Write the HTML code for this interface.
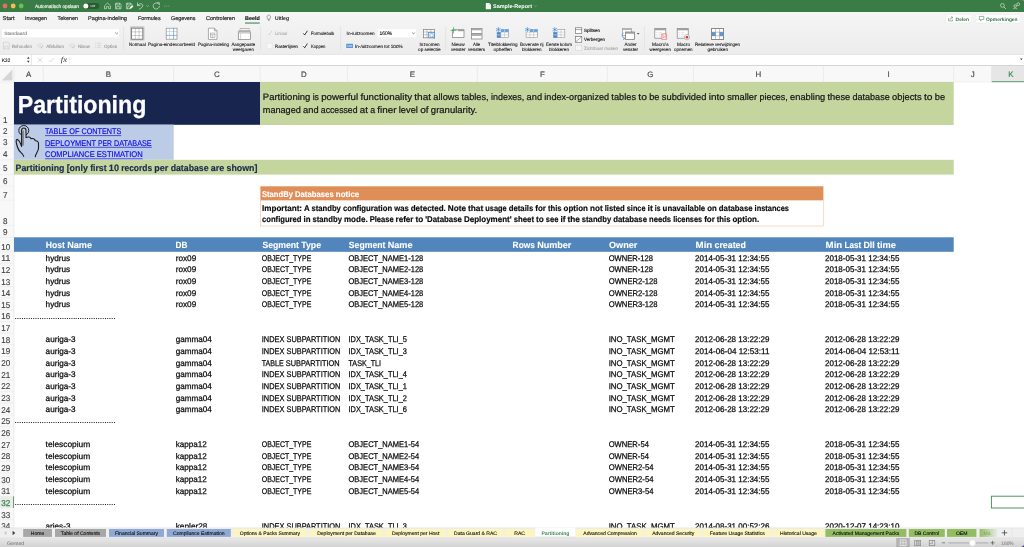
<!DOCTYPE html>
<html lang="nl">
<head>
<meta charset="utf-8">
<title>Sample-Report - Partitioning</title>
<style>
html,body{margin:0;padding:0;background:#fff;}
body{width:1024px;height:547px;overflow:hidden;position:relative;font-family:"Liberation Sans", sans-serif;}
#app{position:absolute;left:0;top:0;width:1024px;height:547px;overflow:hidden;}
#app>div{position:absolute;}
#ui{position:absolute;left:0;top:0;width:1024px;height:547px;font-family:"Liberation Sans", sans-serif;will-change:transform;}
#ui text{white-space:pre;text-rendering:geometricPrecision;}
</style>
</head>
<body>
<div id="app">
<div style="left:0px;top:0px;width:1024px;height:12.5px;background:#3a7c45;"></div>
<div style="left:0px;top:12.3px;width:1024px;height:42.3px;background:linear-gradient(#f5f5f5,#f1f1f1 45%,#ececec);"></div>
<div style="left:0px;top:54.6px;width:1024px;height:10.8px;background:#fff;"></div>
<div style="left:0px;top:54.2px;width:1024px;height:0.6px;background:#e6e6e6;"></div>
<div style="left:0px;top:64.9px;width:1024px;height:1.1px;background:linear-gradient(#e9e9e9,#c2c2c2);"></div>
<div style="left:0px;top:66px;width:1024px;height:462px;background:#fff;"></div>
<div style="left:0px;top:66px;width:1024px;height:16px;background:#f8f8f8;"></div>
<div style="left:0px;top:82px;width:14px;height:446px;background:#f8f8f8;"></div>
<svg id="ui" width="1024" height="547" viewBox="0 0 1024 547">
<circle cx="5" cy="6" r="2.4" fill="#ee6a5e"/>
<circle cx="13.2" cy="6" r="2.4" fill="#f5be4f"/>
<circle cx="21.2" cy="6" r="2.4" fill="#61c454"/>
<text x="35" y="7.7" font-size="4.9" fill="#e6efe7" stroke="#e6efe7" stroke-width="0.2" textLength="44" lengthAdjust="spacingAndGlyphs">Automatisch opslaan</text>
<rect x="83" y="3" width="16.2" height="6" fill="#2b5a33" rx="3"/>
<circle cx="85.8" cy="6" r="2.5" fill="#fff"/>
<text x="90.5" y="7.3" font-size="3" fill="#cfe0d2" font-weight="700" textLength="5.0" lengthAdjust="spacingAndGlyphs">UIT</text>
<path d="M104.5 5.9 L107.5 3 L110.5 5.9 V8.7 H108.6 V6.6 H106.4 V8.7 H104.5 Z" stroke="#e6f0e8" fill="none" stroke-width="0.6" stroke-linejoin="round"/>
<path d="M115.5 3.2 H120 L121 4.2 V8.8 H115.5 Z M116.7 3.3 V5 H119.6 V3.3 M116.7 8.8 V6.6 H119.8 V8.8" stroke="#e6f0e8" fill="none" stroke-width="0.6" stroke-linejoin="round"/>
<path d="M126.4 3.2 H130.8 L131.8 4.2 V6 M129 8.8 H126.4 V3.2 M127.6 3.3 V5 H130.4 V3.3 M127.6 8.8 V6.6 H129.4" stroke="#e6f0e8" fill="none" stroke-width="0.6" stroke-linejoin="round"/>
<path d="M129.4 9 L129.9 7.4 L132.2 5.4 L133.2 6.4 L130.9 8.5 Z" stroke="#fff" fill="#fff" stroke-width="0.3" />
<path d="M137.5 3 V5.6 H140.1 M137.8 5.3 C138.8 3.4 141.8 3.1 142.7 5 C143.4 6.6 141.6 7.8 139.3 9.2" stroke="#e6f0e8" fill="none" stroke-width="0.65" stroke-linecap="round"/>
<path d="M146.4 5.4 L147.6 6.6 L148.8 5.4" stroke="#cfe0d3" fill="none" stroke-width="0.55" />
<path d="M158.6 3.9 A3.1 3.1 0 1 0 159.4 6.3" stroke="#e6f0e8" fill="none" stroke-width="0.65" stroke-linecap="round"/>
<path d="M157 2.7 H159.4 V5" stroke="#e6f0e8" fill="none" stroke-width="0.6" />
<circle cx="164.7" cy="6" r="0.55" fill="#8fb796"/>
<circle cx="166.79999999999998" cy="6" r="0.55" fill="#8fb796"/>
<circle cx="168.89999999999998" cy="6" r="0.55" fill="#8fb796"/>
<path d="M485.8 3 H489.4 L491 4.6 V9.2 H485.8 Z" stroke="none" fill="#f2f7f2" stroke-width="1" />
<path d="M489.4 3 V4.6 H491" stroke="#9fbfa4" fill="none" stroke-width="0.4" />
<text x="493" y="7.8" font-size="5.4" fill="#fff" font-weight="700" textLength="39" lengthAdjust="spacingAndGlyphs">Sample-Report</text>
<path d="M534 5.3 L535.3 6.6 L536.6 5.3" stroke="#8fb596" fill="none" stroke-width="0.55" />
<circle cx="1002.4" cy="5.4" r="1.9" fill="none" stroke="#e8f0e9" stroke-width="0.6"/>
<line x1="1003.8" y1="6.9" x2="1005.8" y2="8.9" stroke="#e8f0e9" stroke-width="0.7" />
<circle cx="1018.2" cy="4.2" r="1.4" fill="none" stroke="#e8f0e9" stroke-width="0.6"/>
<circle cx="1015.2" cy="6" r="1.3" fill="none" stroke="#e8f0e9" stroke-width="0.6"/>
<path d="M1013.2 9.2 C1013.4 7.6 1016.8 7.6 1017 9.2" stroke="#e8f0e9" fill="none" stroke-width="0.6" />
<rect x="1022.6" y="0" width="1.4" height="0.8" fill="#d86fb0"/>
<text x="2.6" y="20" font-size="5.5" fill="#262626" stroke="#262626" stroke-width="0.18" textLength="12.0" lengthAdjust="spacingAndGlyphs">Start</text>
<text x="25" y="20" font-size="5.5" fill="#262626" stroke="#262626" stroke-width="0.18" textLength="22" lengthAdjust="spacingAndGlyphs">Invoegen</text>
<text x="57.6" y="20" font-size="5.5" fill="#262626" stroke="#262626" stroke-width="0.18" textLength="20.4" lengthAdjust="spacingAndGlyphs">Tekenen</text>
<text x="88" y="20" font-size="5.5" fill="#262626" stroke="#262626" stroke-width="0.18" textLength="39" lengthAdjust="spacingAndGlyphs">Pagina-indeling</text>
<text x="138" y="20" font-size="5.5" fill="#262626" stroke="#262626" stroke-width="0.18" textLength="22.6" lengthAdjust="spacingAndGlyphs">Formules</text>
<text x="171" y="20" font-size="5.5" fill="#262626" stroke="#262626" stroke-width="0.18" textLength="24.5" lengthAdjust="spacingAndGlyphs">Gegevens</text>
<text x="206" y="20" font-size="5.5" fill="#262626" stroke="#262626" stroke-width="0.18" textLength="29" lengthAdjust="spacingAndGlyphs">Controleren</text>
<text x="245" y="20" font-size="5.5" fill="#000" font-weight="700" stroke="#000" stroke-width="0.1" textLength="14.7" lengthAdjust="spacingAndGlyphs">Beeld</text>
<rect x="245" y="22.5" width="14.8" height="1.1" fill="#3f8a55"/>
<path d="M267.2 17.6 A1.75 1.75 0 1 1 270.4 17.6 C270 18.4 269.8 18.8 269.8 19.4 H267.8 C267.8 18.8 267.6 18.4 267.2 17.6 Z M268 20.4 H269.6" stroke="#555" fill="none" stroke-width="0.5" />
<text x="275" y="20" font-size="5.5" fill="#1c1c1c" font-weight="700" textLength="14" lengthAdjust="spacingAndGlyphs">Uitleg</text>
<rect x="946" y="14.6" width="25.2" height="8.4" fill="#fff" stroke="#e2e2e2" stroke-width="0.4" rx="0.6"/>
<rect x="976" y="14.6" width="44.2" height="8.4" fill="#fff" stroke="#e2e2e2" stroke-width="0.4" rx="0.6"/>
<path d="M948.6 18.2 V21 H952.4 V19.6 M950 19.8 C950 18.4 951 17.6 952.4 17.6 M951.4 16.4 L952.8 17.6 L951.4 18.8" stroke="#3f7f50" fill="none" stroke-width="0.55" />
<text x="955.6" y="20.8" font-size="4.9" fill="#2f7041" font-weight="700" textLength="13.4" lengthAdjust="spacingAndGlyphs">Delen</text>
<path d="M979.4 16.4 H983.8 V19.6 H981.6 L980.6 20.9 V19.6 H979.4 Z" stroke="#3f7f50" fill="none" stroke-width="0.55" stroke-linejoin="round"/>
<text x="986" y="20.8" font-size="4.9" fill="#2f7041" font-weight="700" textLength="31.6" lengthAdjust="spacingAndGlyphs">Opmerkingen</text>
<line x1="123.6" y1="26.3" x2="123.6" y2="50.3" stroke="#dcdcdc" stroke-width="0.6" />
<line x1="260.6" y1="26.3" x2="260.6" y2="50.3" stroke="#dcdcdc" stroke-width="0.6" />
<line x1="340.6" y1="26.3" x2="340.6" y2="50.3" stroke="#dcdcdc" stroke-width="0.6" />
<line x1="445.6" y1="26.3" x2="445.6" y2="50.3" stroke="#dcdcdc" stroke-width="0.6" />
<line x1="644.4" y1="26.3" x2="644.4" y2="50.3" stroke="#dcdcdc" stroke-width="0.6" />
<rect x="2" y="29" width="117" height="8.2" fill="#fff" rx="0.5"/>
<text x="4.2" y="34.6" font-size="4.7" fill="#6e6e6e" stroke="#6e6e6e" stroke-width="0.05" textLength="22.8" lengthAdjust="spacingAndGlyphs">Standaard</text>
<path d="M115.2 32.5 L116.6 33.9 L118 32.5" stroke="#444" fill="none" stroke-width="0.6" />
<path d="M3.4 42.2 H8 L9.4 43.4 V49 H3.4 Z M4.8 49 V46.2 H8 V49" stroke="#c4c4c4" fill="none" stroke-width="0.5" />
<text x="12" y="47.6" font-size="4.7" fill="#8e8e8e" stroke="#8e8e8e" stroke-width="0.06" textLength="20" lengthAdjust="spacingAndGlyphs">Behouden</text>
<path d="M37.4 45.6 C39 43.6 41.6 43.6 43.2 45.6 C41.6 47.4 39 47.4 37.4 45.6 Z" stroke="#c0c0c0" fill="none" stroke-width="0.5" />
<path d="M40.6 46.2 L42.8 48.4 M42.8 46.2 L40.6 48.4" stroke="#e9a9a0" fill="none" stroke-width="0.5" />
<text x="46.2" y="47.6" font-size="4.7" fill="#8e8e8e" stroke="#8e8e8e" stroke-width="0.06" textLength="17.8" lengthAdjust="spacingAndGlyphs">Afsluiten</text>
<path d="M69.2 45.6 C70.8 43.6 73.4 43.6 75 45.6 C73.4 47.4 70.8 47.4 69.2 45.6 Z" stroke="#c0c0c0" fill="none" stroke-width="0.5" />
<path d="M73.4 46 V48.6 M72.1 47.3 H74.7" stroke="#a6d3a6" fill="none" stroke-width="0.5" />
<text x="78" y="47.6" font-size="4.7" fill="#8e8e8e" stroke="#8e8e8e" stroke-width="0.06" textLength="11.8" lengthAdjust="spacingAndGlyphs">Nieuw</text>
<line x1="95.2" y1="43.2" x2="96.2" y2="43.2" stroke="#c0c0c0" stroke-width="0.6" />
<line x1="97.2" y1="43.2" x2="101" y2="43.2" stroke="#c0c0c0" stroke-width="0.5" />
<line x1="95.2" y1="45.400000000000006" x2="96.2" y2="45.400000000000006" stroke="#c0c0c0" stroke-width="0.6" />
<line x1="97.2" y1="45.400000000000006" x2="101" y2="45.400000000000006" stroke="#c0c0c0" stroke-width="0.5" />
<line x1="95.2" y1="47.6" x2="96.2" y2="47.6" stroke="#c0c0c0" stroke-width="0.6" />
<line x1="97.2" y1="47.6" x2="101" y2="47.6" stroke="#c0c0c0" stroke-width="0.5" />
<text x="104" y="47.6" font-size="4.7" fill="#8e8e8e" stroke="#8e8e8e" stroke-width="0.06" textLength="13" lengthAdjust="spacingAndGlyphs">Opties</text>
<rect x="130" y="26.3" width="14.5" height="14.3" fill="#cacaca" rx="0.8"/>
<rect x="131.6" y="28.2" width="11.2" height="11" fill="#fff" stroke="#6e6e6e" stroke-width="0.8"/>
<line x1="135.33333333333331" y1="28.2" x2="135.33333333333331" y2="39.2" stroke="#9a9a9a" stroke-width="0.5" />
<line x1="131.6" y1="31.866666666666667" x2="142.8" y2="31.866666666666667" stroke="#9a9a9a" stroke-width="0.5" />
<line x1="139.06666666666666" y1="28.2" x2="139.06666666666666" y2="39.2" stroke="#9a9a9a" stroke-width="0.5" />
<line x1="131.6" y1="35.53333333333333" x2="142.8" y2="35.53333333333333" stroke="#9a9a9a" stroke-width="0.5" />
<text x="129" y="45.6" font-size="4.6" fill="#111" stroke="#111" stroke-width="0.09" textLength="16.7" lengthAdjust="spacingAndGlyphs">Normaal</text>
<rect x="166.2" y="28.2" width="10.8" height="11" fill="#fff" stroke="#8a8a8a" stroke-width="0.7"/>
<line x1="169.6" y1="28.2" x2="169.6" y2="39.2" stroke="#b0b0b0" stroke-width="0.5" />
<line x1="166.2" y1="31.6" x2="177" y2="31.6" stroke="#b0b0b0" stroke-width="0.5" />
<line x1="173.6" y1="28.2" x2="173.6" y2="39.2" stroke="#3b8ad9" stroke-width="0.6" />
<line x1="166.2" y1="35.4" x2="177" y2="35.4" stroke="#3b8ad9" stroke-width="0.6" />
<text x="148" y="45.6" font-size="4.6" fill="#111" stroke="#111" stroke-width="0.09" textLength="47" lengthAdjust="spacingAndGlyphs">Pagina-eindevoorbeeld</text>
<path d="M208.4 28.2 H214.4 L217 30.8 V39.4 H208.4 Z M214.4 28.2 V30.8 H217" stroke="#8a8a8a" fill="#fff" stroke-width="0.7" />
<rect x="210.4" y="33" width="4.6" height="4.4" fill="#f4f4f4" stroke="#8a8a8a" stroke-width="0.5"/>
<line x1="210.4" y1="34.6" x2="215" y2="34.6" stroke="#8a8a8a" stroke-width="0.4" />
<line x1="212.4" y1="34.6" x2="212.4" y2="37.4" stroke="#8a8a8a" stroke-width="0.4" />
<text x="198" y="45.6" font-size="4.6" fill="#111" stroke="#111" stroke-width="0.09" textLength="31" lengthAdjust="spacingAndGlyphs">Pagina-indeling</text>
<path d="M240 29.6 V28.5 H249.2 V29.6" stroke="#8a8a8a" fill="none" stroke-width="0.55" />
<line x1="238.6" y1="30.6" x2="250.4" y2="30.6" stroke="#8a8a8a" stroke-width="0.6" />
<rect x="238.3" y="31.8" width="12.2" height="7.7" fill="#fff" stroke="#7c7c7c" stroke-width="0.7"/>
<rect x="238.7" y="32.2" width="11.4" height="1.3" fill="#c4c4c4"/>
<line x1="240.6" y1="33.5" x2="240.6" y2="39.3" stroke="#b0b0b0" stroke-width="0.5" />
<text x="231.4" y="45.6" font-size="4.6" fill="#111" stroke="#111" stroke-width="0.09" textLength="23.8" lengthAdjust="spacingAndGlyphs">Aangepaste</text>
<text x="232.8" y="50.6" font-size="4.6" fill="#111" stroke="#111" stroke-width="0.09" textLength="21.0" lengthAdjust="spacingAndGlyphs">weergaven</text>
<rect x="267" y="30.4" width="5.4" height="5.4" fill="#f3f3f3" stroke="#e8e8e8" stroke-width="0.4" rx="0.8"/>
<path d="M268 33.4 L269.3 35.0 L271.9 30.799999999999997" stroke="#c2c2c2" fill="none" stroke-width="0.6" />
<text x="275" y="34.6" font-size="4.6" fill="#a9a9a9" stroke="#a9a9a9" stroke-width="0.09" textLength="12" lengthAdjust="spacingAndGlyphs">Liniaal</text>
<rect x="267" y="43.2" width="5.4" height="5.4" fill="#f8f8f8" stroke="#dcdcdc" stroke-width="0.4" rx="0.8"/>
<text x="275" y="47.6" font-size="4.6" fill="#111" stroke="#111" stroke-width="0.09" textLength="23" lengthAdjust="spacingAndGlyphs">Rasterlijnen</text>
<rect x="302.4" y="30.4" width="5.4" height="5.4" fill="#f8f8f8" stroke="#dcdcdc" stroke-width="0.4" rx="0.8"/>
<path d="M303.4 33.4 L304.7 35.0 L307.29999999999995 30.799999999999997" stroke="#111" fill="none" stroke-width="0.85" />
<text x="311" y="34.6" font-size="4.6" fill="#111" stroke="#111" stroke-width="0.09" textLength="23.2" lengthAdjust="spacingAndGlyphs">Formulebalk</text>
<rect x="302.4" y="43.2" width="5.4" height="5.4" fill="#f8f8f8" stroke="#dcdcdc" stroke-width="0.4" rx="0.8"/>
<path d="M303.4 46.2 L304.7 47.800000000000004 L307.29999999999995 43.6" stroke="#111" fill="none" stroke-width="0.85" />
<text x="311" y="47.6" font-size="4.6" fill="#111" stroke="#111" stroke-width="0.09" textLength="14.4" lengthAdjust="spacingAndGlyphs">Koppen</text>
<text x="346.6" y="34.6" font-size="4.6" fill="#111" stroke="#111" stroke-width="0.09" textLength="28.0" lengthAdjust="spacingAndGlyphs">In-/uitzoomen</text>
<rect x="377.6" y="29" width="38.6" height="8.2" fill="#fff" rx="0.5"/>
<text x="379.6" y="34.9" font-size="5.2" fill="#000" stroke="#000" stroke-width="0.1" textLength="12.6" lengthAdjust="spacingAndGlyphs">160%</text>
<path d="M412.1 32.5 L413.5 33.9 L414.9 32.5" stroke="#444" fill="none" stroke-width="0.6" />
<rect x="346.2" y="43.7" width="6.8" height="4.4" fill="#5a95d5" rx="0.4"/>
<text x="347" y="47.2" font-size="3" fill="#cfe2f7" font-weight="700" textLength="5.4" lengthAdjust="spacingAndGlyphs">100</text>
<text x="355" y="47.6" font-size="4.6" fill="#111" stroke="#111" stroke-width="0.09" textLength="47.6" lengthAdjust="spacingAndGlyphs">In-/uitzoomen tot 100%</text>
<rect x="423.4" y="29.4" width="11" height="8.4" fill="#fff" stroke="#7a7a7a" stroke-width="0.7"/>
<line x1="423.4" y1="32" x2="434.4" y2="32" stroke="#8a8a8a" stroke-width="0.5" />
<line x1="423.4" y1="34.8" x2="434.4" y2="34.8" stroke="#8a8a8a" stroke-width="0.5" />
<line x1="427" y1="29.4" x2="427" y2="37.8" stroke="#8a8a8a" stroke-width="0.5" />
<line x1="430.8" y1="29.4" x2="430.8" y2="37.8" stroke="#8a8a8a" stroke-width="0.5" />
<rect x="428.6" y="32.6" width="5.8" height="5.2" fill="#e9f2fb" stroke="#3b8ad9" stroke-width="0.7"/>
<circle cx="431.6" cy="35.2" r="1.7" fill="#fff" stroke="#777" stroke-width="0.5"/>
<line x1="432.8" y1="36.6" x2="434.6" y2="38.8" stroke="#777" stroke-width="0.6" />
<text x="419.6" y="45.6" font-size="4.6" fill="#111" stroke="#111" stroke-width="0.09" textLength="20.0" lengthAdjust="spacingAndGlyphs">Inzoomen</text>
<text x="418" y="50.6" font-size="4.6" fill="#111" stroke="#111" stroke-width="0.09" textLength="22.6" lengthAdjust="spacingAndGlyphs">op selectie</text>
<rect x="452.4" y="29.8" width="11.6" height="7.6" fill="#fff" stroke="#7a7a7a" stroke-width="0.7"/>
<rect x="458" y="29.6" width="6" height="1.6" fill="#9a9a9a"/>
<line x1="453.6" y1="27.2" x2="453.6" y2="33.6" stroke="#2fa84f" stroke-width="0.7" />
<line x1="450.6" y1="30.4" x2="456.6" y2="30.4" stroke="#2fa84f" stroke-width="0.7" />
<text x="451.6" y="45.6" font-size="4.6" fill="#111" stroke="#111" stroke-width="0.09" textLength="13.0" lengthAdjust="spacingAndGlyphs">Nieuw</text>
<text x="451" y="50.6" font-size="4.6" fill="#111" stroke="#111" stroke-width="0.09" textLength="14.4" lengthAdjust="spacingAndGlyphs">venster</text>
<rect x="471.4" y="28.6" width="10.6" height="4.8" fill="#fff" stroke="#7a7a7a" stroke-width="0.7"/>
<rect x="471.6" y="28.8" width="10.2" height="1.5" fill="#a9a9a9"/>
<rect x="471.4" y="34.2" width="10.6" height="4.8" fill="#fff" stroke="#7a7a7a" stroke-width="0.7"/>
<rect x="471.6" y="34.4" width="10.2" height="1.5" fill="#a9a9a9"/>
<text x="473" y="45.6" font-size="4.6" fill="#111" stroke="#111" stroke-width="0.09" textLength="7.2" lengthAdjust="spacingAndGlyphs">Alle</text>
<text x="468" y="50.6" font-size="4.6" fill="#111" stroke="#111" stroke-width="0.09" textLength="17" lengthAdjust="spacingAndGlyphs">vensters</text>
<rect x="497.1" y="29.3" width="11.3" height="8.4" fill="#fff" stroke="#8f8f8f" stroke-width="0.6"/>
<rect x="500.8666666666667" y="29.3" width="7.533333333333333" height="2.8000000000000003" fill="#62a2ea"/>
<rect x="497.1" y="32.1" width="3.766666666666667" height="5.6" fill="#3f86d9"/>
<line x1="500.8666666666667" y1="29.3" x2="500.8666666666667" y2="37.7" stroke="#a8a8a8" stroke-width="0.45" />
<line x1="497.1" y1="32.1" x2="508.40000000000003" y2="32.1" stroke="#a8a8a8" stroke-width="0.45" />
<line x1="504.6333333333334" y1="29.3" x2="504.6333333333334" y2="37.7" stroke="#a8a8a8" stroke-width="0.45" />
<line x1="497.1" y1="34.9" x2="508.40000000000003" y2="34.9" stroke="#a8a8a8" stroke-width="0.45" />
<line x1="504.6333333333334" y1="29.3" x2="504.6333333333334" y2="32.1" stroke="#e8f1fc" stroke-width="0.45" />
<line x1="497.1" y1="34.9" x2="500.8666666666667" y2="34.9" stroke="#e8f1fc" stroke-width="0.45" />
<rect x="496.6" y="28.8" width="4.066666666666667" height="3.1" fill="#f1f1f1"/>
<line x1="498.4" y1="27.0" x2="498.4" y2="32.2" stroke="#2f7fd6" stroke-width="0.6" />
<line x1="496.15" y1="28.3" x2="500.65" y2="30.9" stroke="#2f7fd6" stroke-width="0.6" />
<line x1="496.15" y1="30.9" x2="500.65" y2="28.3" stroke="#2f7fd6" stroke-width="0.6" />
<text x="488" y="45.6" font-size="4.6" fill="#111" stroke="#111" stroke-width="0.09" textLength="29.6" lengthAdjust="spacingAndGlyphs">Titelblokkering</text>
<text x="493.6" y="50.6" font-size="4.6" fill="#111" stroke="#111" stroke-width="0.09" textLength="18.4" lengthAdjust="spacingAndGlyphs">opheffen</text>
<rect x="526.1" y="29.3" width="11.3" height="8.4" fill="#fff" stroke="#8f8f8f" stroke-width="0.6"/>
<rect x="529.8666666666667" y="29.3" width="7.533333333333333" height="2.8000000000000003" fill="#62a2ea"/>
<line x1="529.8666666666667" y1="29.3" x2="529.8666666666667" y2="37.7" stroke="#a8a8a8" stroke-width="0.45" />
<line x1="526.1" y1="32.1" x2="537.4" y2="32.1" stroke="#a8a8a8" stroke-width="0.45" />
<line x1="533.6333333333333" y1="29.3" x2="533.6333333333333" y2="37.7" stroke="#a8a8a8" stroke-width="0.45" />
<line x1="526.1" y1="34.9" x2="537.4" y2="34.9" stroke="#a8a8a8" stroke-width="0.45" />
<line x1="533.6333333333333" y1="29.3" x2="533.6333333333333" y2="32.1" stroke="#e8f1fc" stroke-width="0.45" />
<rect x="525.6" y="28.8" width="4.066666666666667" height="3.1" fill="#f1f1f1"/>
<line x1="527.4" y1="27.0" x2="527.4" y2="32.2" stroke="#2f7fd6" stroke-width="0.6" />
<line x1="525.15" y1="28.3" x2="529.65" y2="30.9" stroke="#2f7fd6" stroke-width="0.6" />
<line x1="525.15" y1="30.9" x2="529.65" y2="28.3" stroke="#2f7fd6" stroke-width="0.6" />
<text x="520" y="45.6" font-size="4.6" fill="#111" stroke="#111" stroke-width="0.09" textLength="23.6" lengthAdjust="spacingAndGlyphs">Bovenste rij</text>
<text x="522" y="50.6" font-size="4.6" fill="#111" stroke="#111" stroke-width="0.09" textLength="19.6" lengthAdjust="spacingAndGlyphs">blokkeren</text>
<rect x="553.5" y="29.3" width="11.3" height="8.4" fill="#fff" stroke="#8f8f8f" stroke-width="0.6"/>
<rect x="553.5" y="32.1" width="3.766666666666667" height="5.6" fill="#3f86d9"/>
<line x1="557.2666666666667" y1="29.3" x2="557.2666666666667" y2="37.7" stroke="#a8a8a8" stroke-width="0.45" />
<line x1="553.5" y1="32.1" x2="564.8" y2="32.1" stroke="#a8a8a8" stroke-width="0.45" />
<line x1="561.0333333333333" y1="29.3" x2="561.0333333333333" y2="37.7" stroke="#a8a8a8" stroke-width="0.45" />
<line x1="553.5" y1="34.9" x2="564.8" y2="34.9" stroke="#a8a8a8" stroke-width="0.45" />
<line x1="553.5" y1="34.9" x2="557.2666666666667" y2="34.9" stroke="#e8f1fc" stroke-width="0.45" />
<rect x="553.0" y="28.8" width="4.066666666666667" height="3.1" fill="#f1f1f1"/>
<line x1="554.8" y1="27.0" x2="554.8" y2="32.2" stroke="#2f7fd6" stroke-width="0.6" />
<line x1="552.55" y1="28.3" x2="557.05" y2="30.9" stroke="#2f7fd6" stroke-width="0.6" />
<line x1="552.55" y1="30.9" x2="557.05" y2="28.3" stroke="#2f7fd6" stroke-width="0.6" />
<text x="546" y="45.6" font-size="4.6" fill="#111" stroke="#111" stroke-width="0.09" textLength="26" lengthAdjust="spacingAndGlyphs">Eerste kolom</text>
<text x="549" y="50.6" font-size="4.6" fill="#111" stroke="#111" stroke-width="0.09" textLength="20" lengthAdjust="spacingAndGlyphs">blokkeren</text>
<rect x="575.4" y="27.8" width="6.4" height="5.6" fill="#fff" stroke="#555" stroke-width="0.55"/>
<line x1="575.4" y1="29.6" x2="581.8" y2="29.6" stroke="#555" stroke-width="0.5" />
<text x="584" y="32.2" font-size="4.6" fill="#111" stroke="#111" stroke-width="0.14" textLength="16" lengthAdjust="spacingAndGlyphs">Splitsen</text>
<rect x="575.4" y="36.6" width="6.4" height="5.6" fill="#fff" stroke="#555" stroke-width="0.55"/>
<line x1="576" y1="41.6" x2="581.2" y2="37.2" stroke="#555" stroke-width="0.5" />
<text x="584" y="41" font-size="4.6" fill="#111" stroke="#111" stroke-width="0.12" textLength="21" lengthAdjust="spacingAndGlyphs">Verbergen</text>
<rect x="575.4" y="45.2" width="6.4" height="5.4" fill="#f6f6f6" stroke="#cfcfcf" stroke-width="0.5"/>
<text x="584" y="49.6" font-size="4.6" fill="#a6a6a6" stroke="#a6a6a6" stroke-width="0.08" textLength="34" lengthAdjust="spacingAndGlyphs">Zichtbaar maken</text>
<rect x="622.6" y="28.6" width="9" height="7" fill="#fff" stroke="#8a8a8a" stroke-width="0.6"/>
<rect x="622.8" y="28.8" width="8.6" height="1.3" fill="#b5b5b5"/>
<rect x="625.6" y="32" width="9" height="7.4" fill="#fff" stroke="#6e6e6e" stroke-width="0.7"/>
<rect x="625.8" y="32.2" width="8.6" height="1.4" fill="#8f8f8f"/>
<path d="M623.6 32.6 C621.4 34.6 621.8 37.6 624.6 38.4 M623.2 37 L624.8 38.5 L623 39.8" stroke="#3b8ad9" fill="none" stroke-width="0.65" />
<path d="M636.8 33 H639.6 L638.2 34.6 Z" stroke="none" fill="#555" stroke-width="1" />
<text x="624.6" y="45.6" font-size="4.6" fill="#111" stroke="#111" stroke-width="0.09" textLength="12.0" lengthAdjust="spacingAndGlyphs">Ander</text>
<text x="623" y="50.6" font-size="4.6" fill="#111" stroke="#111" stroke-width="0.09" textLength="15" lengthAdjust="spacingAndGlyphs">venster</text>
<rect x="654.8" y="28.6" width="11" height="9.6" fill="#fff" stroke="#7a7a7a" stroke-width="0.7"/>
<rect x="655.0" y="28.8" width="10.6" height="1.5" fill="#a0a0a0"/>
<line x1="656.1999999999999" y1="32.4" x2="657.4" y2="32.4" stroke="#b5b5b5" stroke-width="0.5" />
<line x1="658.4" y1="32.4" x2="661.8" y2="32.4" stroke="#c5c5c5" stroke-width="0.5" />
<line x1="656.1999999999999" y1="34.3" x2="657.4" y2="34.3" stroke="#b5b5b5" stroke-width="0.5" />
<line x1="658.4" y1="34.3" x2="661.8" y2="34.3" stroke="#c5c5c5" stroke-width="0.5" />
<line x1="656.1999999999999" y1="36.199999999999996" x2="657.4" y2="36.199999999999996" stroke="#b5b5b5" stroke-width="0.5" />
<line x1="658.4" y1="36.199999999999996" x2="661.8" y2="36.199999999999996" stroke="#c5c5c5" stroke-width="0.5" />
<path d="M661.8 33.8 H666.6 V39.4 H661.8 Z" stroke="#e2574c" fill="#fff" stroke-width="0.6" />
<path d="M663 34 V38 L664.2 37 L665.4 38 V34" stroke="#e2574c" fill="#fbeceb" stroke-width="0.45" />
<text x="652" y="45.6" font-size="4.6" fill="#111" stroke="#111" stroke-width="0.09" textLength="16.6" lengthAdjust="spacingAndGlyphs">Macro's</text>
<text x="649.6" y="50.6" font-size="4.6" fill="#111" stroke="#111" stroke-width="0.09" textLength="21.4" lengthAdjust="spacingAndGlyphs">weergeven</text>
<rect x="677.2" y="28.6" width="11" height="9.6" fill="#fff" stroke="#7a7a7a" stroke-width="0.7"/>
<rect x="677.4000000000001" y="28.8" width="10.6" height="1.5" fill="#a0a0a0"/>
<line x1="678.6" y1="32.4" x2="679.8000000000001" y2="32.4" stroke="#b5b5b5" stroke-width="0.5" />
<line x1="680.8000000000001" y1="32.4" x2="684.2" y2="32.4" stroke="#c5c5c5" stroke-width="0.5" />
<line x1="678.6" y1="34.3" x2="679.8000000000001" y2="34.3" stroke="#b5b5b5" stroke-width="0.5" />
<line x1="680.8000000000001" y1="34.3" x2="684.2" y2="34.3" stroke="#c5c5c5" stroke-width="0.5" />
<line x1="678.6" y1="36.199999999999996" x2="679.8000000000001" y2="36.199999999999996" stroke="#b5b5b5" stroke-width="0.5" />
<line x1="680.8000000000001" y1="36.199999999999996" x2="684.2" y2="36.199999999999996" stroke="#c5c5c5" stroke-width="0.5" />
<circle cx="687" cy="37.2" r="2.6" fill="#fff" stroke="#777" stroke-width="0.5"/>
<circle cx="687" cy="37.2" r="1.3" fill="#e02b20"/>
<text x="677" y="45.6" font-size="4.6" fill="#111" stroke="#111" stroke-width="0.09" textLength="13" lengthAdjust="spacingAndGlyphs">Macro</text>
<text x="674" y="50.6" font-size="4.6" fill="#111" stroke="#111" stroke-width="0.09" textLength="18.6" lengthAdjust="spacingAndGlyphs">opnemen</text>
<rect x="711.4" y="28.6" width="12.2" height="10.8" fill="#fff" stroke="#6e6e6e" stroke-width="0.8"/>
<rect x="711.8" y="32.1" width="3.9" height="3.9" fill="#5596df"/>
<rect x="719.5" y="32.1" width="3.9" height="3.9" fill="#5596df"/>
<line x1="715.4666666666667" y1="28.6" x2="715.4666666666667" y2="39.4" stroke="#8a8a8a" stroke-width="0.5" />
<line x1="711.4" y1="32.2" x2="723.6" y2="32.2" stroke="#8a8a8a" stroke-width="0.5" />
<line x1="719.5333333333333" y1="28.6" x2="719.5333333333333" y2="39.4" stroke="#8a8a8a" stroke-width="0.5" />
<line x1="711.4" y1="35.800000000000004" x2="723.6" y2="35.800000000000004" stroke="#8a8a8a" stroke-width="0.5" />
<text x="695" y="45.6" font-size="4.6" fill="#111" stroke="#111" stroke-width="0.09" textLength="45" lengthAdjust="spacingAndGlyphs">Relatieve verwijzingen</text>
<text x="707.6" y="50.6" font-size="4.6" fill="#111" stroke="#111" stroke-width="0.09" textLength="20.4" lengthAdjust="spacingAndGlyphs">gebruiken</text>
<text x="2" y="61.7" font-size="5" fill="#000" stroke="#000" stroke-width="0.08" textLength="8.2" lengthAdjust="spacingAndGlyphs">K32</text>
<path d="M27 58.7 L28.3 56.8 L29.6 58.7 Z M27 60.8 L28.3 62.7 L29.6 60.8 Z" stroke="none" fill="#3a3a3a" stroke-width="1" />
<line x1="31.6" y1="54.8" x2="31.6" y2="65.2" stroke="#d4d4d4" stroke-width="0.6" />
<path d="M38 58 L42 62 M42 58 L38 62" stroke="#c4c4c4" fill="none" stroke-width="0.6" />
<path d="M49.2 60.4 L50.8 62 L53.8 58" stroke="#c4c4c4" fill="none" stroke-width="0.6" />
<text x="60.8" y="62.3" font-size="7.6" fill="#333" font-style="italic" font-family='"Liberation Serif", serif' textLength="6.2" lengthAdjust="spacingAndGlyphs">fx</text>
<line x1="69.6" y1="56.6" x2="69.6" y2="63.6" stroke="#e4e4e4" stroke-width="0.5" />
<path d="M1020 58.4 H1022.6 L1021.3 60.2 Z" stroke="none" fill="#444" stroke-width="1" />
<rect x="991.6" y="66" width="32.4" height="16" fill="#e6e6e6"/>
<rect x="991.6" y="81.2" width="32.4" height="1" fill="#3f8a55"/>
<line x1="14" y1="66.4" x2="14" y2="82" stroke="#dedede" stroke-width="0.5" />
<text x="28.6" y="76.9" font-size="7.9" fill="#484848" text-anchor="middle" stroke="#484848" stroke-width="0.15">A</text>
<line x1="43.2" y1="66.4" x2="43.2" y2="82" stroke="#dedede" stroke-width="0.5" />
<text x="108.4" y="76.9" font-size="7.9" fill="#484848" text-anchor="middle" stroke="#484848" stroke-width="0.15">B</text>
<line x1="173.6" y1="66.4" x2="173.6" y2="82" stroke="#dedede" stroke-width="0.5" />
<text x="216.89999999999998" y="76.9" font-size="7.9" fill="#484848" text-anchor="middle" stroke="#484848" stroke-width="0.15">C</text>
<line x1="260.2" y1="66.4" x2="260.2" y2="82" stroke="#dedede" stroke-width="0.5" />
<text x="303.79999999999995" y="76.9" font-size="7.9" fill="#484848" text-anchor="middle" stroke="#484848" stroke-width="0.15">D</text>
<line x1="347.4" y1="66.4" x2="347.4" y2="82" stroke="#dedede" stroke-width="0.5" />
<text x="412.35" y="76.9" font-size="7.9" fill="#484848" text-anchor="middle" stroke="#484848" stroke-width="0.15">E</text>
<line x1="477.3" y1="66.4" x2="477.3" y2="82" stroke="#dedede" stroke-width="0.5" />
<text x="542.3" y="76.9" font-size="7.9" fill="#484848" text-anchor="middle" stroke="#484848" stroke-width="0.15">F</text>
<line x1="607.3" y1="66.4" x2="607.3" y2="82" stroke="#dedede" stroke-width="0.5" />
<text x="650.3499999999999" y="76.9" font-size="7.9" fill="#484848" text-anchor="middle" stroke="#484848" stroke-width="0.15">G</text>
<line x1="693.4" y1="66.4" x2="693.4" y2="82" stroke="#dedede" stroke-width="0.5" />
<text x="758.4" y="76.9" font-size="7.9" fill="#484848" text-anchor="middle" stroke="#484848" stroke-width="0.15">H</text>
<line x1="823.4" y1="66.4" x2="823.4" y2="82" stroke="#dedede" stroke-width="0.5" />
<text x="888.55" y="76.9" font-size="7.9" fill="#484848" text-anchor="middle" stroke="#484848" stroke-width="0.15">I</text>
<line x1="953.7" y1="66.4" x2="953.7" y2="82" stroke="#dedede" stroke-width="0.5" />
<text x="972.6500000000001" y="76.9" font-size="7.9" fill="#484848" text-anchor="middle" stroke="#484848" stroke-width="0.15">J</text>
<line x1="991.6" y1="66.4" x2="991.6" y2="82" stroke="#dedede" stroke-width="0.5" />
<text x="1010.9" y="76.9" font-size="7.9" fill="#3f8a55" text-anchor="middle" stroke="#3f8a55" stroke-width="0.15">K</text>
<path d="M12.4 69.6 V80.6 H1.6 Z" stroke="none" fill="#d6d6d6" stroke-width="1" />
<line x1="0" y1="82" x2="1024" y2="82" stroke="#e0e0e0" stroke-width="0.4" />
<line x1="0" y1="124.6" x2="14" y2="124.6" stroke="#e2e2e2" stroke-width="0.4" />
<text x="2.95" y="122.55" font-size="8.5" fill="#3c3c3c" stroke="#3c3c3c" stroke-width="0.12" textLength="4.51" lengthAdjust="spacingAndGlyphs">1</text>
<line x1="0" y1="136.3" x2="14" y2="136.3" stroke="#e2e2e2" stroke-width="0.4" />
<text x="2.95" y="133.8" font-size="8.5" fill="#3c3c3c" stroke="#3c3c3c" stroke-width="0.12" textLength="4.51" lengthAdjust="spacingAndGlyphs">2</text>
<line x1="0" y1="148" x2="14" y2="148" stroke="#e2e2e2" stroke-width="0.4" />
<text x="2.95" y="145.3" font-size="8.5" fill="#3c3c3c" stroke="#3c3c3c" stroke-width="0.12" textLength="4.51" lengthAdjust="spacingAndGlyphs">3</text>
<line x1="0" y1="159.8" x2="14" y2="159.8" stroke="#e2e2e2" stroke-width="0.4" />
<text x="2.95" y="157.0" font-size="8.5" fill="#3c3c3c" stroke="#3c3c3c" stroke-width="0.12" textLength="4.51" lengthAdjust="spacingAndGlyphs">4</text>
<line x1="0" y1="174.6" x2="14" y2="174.6" stroke="#e2e2e2" stroke-width="0.4" />
<text x="2.95" y="171.2" font-size="8.5" fill="#3c3c3c" stroke="#3c3c3c" stroke-width="0.12" textLength="4.51" lengthAdjust="spacingAndGlyphs">5</text>
<line x1="0" y1="186.2" x2="14" y2="186.2" stroke="#e2e2e2" stroke-width="0.4" />
<text x="2.95" y="184.15" font-size="8.5" fill="#3c3c3c" stroke="#3c3c3c" stroke-width="0.12" textLength="4.51" lengthAdjust="spacingAndGlyphs">6</text>
<line x1="0" y1="200.2" x2="14" y2="200.2" stroke="#e2e2e2" stroke-width="0.4" />
<text x="2.95" y="198.15" font-size="8.5" fill="#3c3c3c" stroke="#3c3c3c" stroke-width="0.12" textLength="4.51" lengthAdjust="spacingAndGlyphs">7</text>
<line x1="0" y1="225.6" x2="14" y2="225.6" stroke="#e2e2e2" stroke-width="0.4" />
<text x="2.95" y="223.55" font-size="8.5" fill="#3c3c3c" stroke="#3c3c3c" stroke-width="0.12" textLength="4.51" lengthAdjust="spacingAndGlyphs">8</text>
<line x1="0" y1="237.4" x2="14" y2="237.4" stroke="#e2e2e2" stroke-width="0.4" />
<text x="2.95" y="235.35" font-size="8.5" fill="#3c3c3c" stroke="#3c3c3c" stroke-width="0.12" textLength="4.51" lengthAdjust="spacingAndGlyphs">9</text>
<line x1="0" y1="251.6" x2="14" y2="251.6" stroke="#e2e2e2" stroke-width="0.4" />
<text x="1.29" y="249.55" font-size="8.5" fill="#3c3c3c" stroke="#3c3c3c" stroke-width="0.12" textLength="9.02" lengthAdjust="spacingAndGlyphs">10</text>
<line x1="0" y1="263.255" x2="14" y2="263.255" stroke="#e2e2e2" stroke-width="0.4" />
<text x="1.29" y="261.2" font-size="8.5" fill="#3c3c3c" stroke="#3c3c3c" stroke-width="0.12" textLength="9.02" lengthAdjust="spacingAndGlyphs">11</text>
<line x1="0" y1="274.90999999999997" x2="14" y2="274.90999999999997" stroke="#e2e2e2" stroke-width="0.4" />
<text x="1.29" y="272.86" font-size="8.5" fill="#3c3c3c" stroke="#3c3c3c" stroke-width="0.12" textLength="9.02" lengthAdjust="spacingAndGlyphs">12</text>
<line x1="0" y1="286.565" x2="14" y2="286.565" stroke="#e2e2e2" stroke-width="0.4" />
<text x="1.29" y="284.51" font-size="8.5" fill="#3c3c3c" stroke="#3c3c3c" stroke-width="0.12" textLength="9.02" lengthAdjust="spacingAndGlyphs">13</text>
<line x1="0" y1="298.21999999999997" x2="14" y2="298.21999999999997" stroke="#e2e2e2" stroke-width="0.4" />
<text x="1.29" y="296.17" font-size="8.5" fill="#3c3c3c" stroke="#3c3c3c" stroke-width="0.12" textLength="9.02" lengthAdjust="spacingAndGlyphs">14</text>
<line x1="0" y1="309.875" x2="14" y2="309.875" stroke="#e2e2e2" stroke-width="0.4" />
<text x="1.29" y="307.82" font-size="8.5" fill="#3c3c3c" stroke="#3c3c3c" stroke-width="0.12" textLength="9.02" lengthAdjust="spacingAndGlyphs">15</text>
<line x1="0" y1="321.53" x2="14" y2="321.53" stroke="#e2e2e2" stroke-width="0.4" />
<text x="1.29" y="319.48" font-size="8.5" fill="#3c3c3c" stroke="#3c3c3c" stroke-width="0.12" textLength="9.02" lengthAdjust="spacingAndGlyphs">16</text>
<line x1="0" y1="333.185" x2="14" y2="333.185" stroke="#e2e2e2" stroke-width="0.4" />
<text x="1.29" y="331.13" font-size="8.5" fill="#3c3c3c" stroke="#3c3c3c" stroke-width="0.12" textLength="9.02" lengthAdjust="spacingAndGlyphs">17</text>
<line x1="0" y1="344.84" x2="14" y2="344.84" stroke="#e2e2e2" stroke-width="0.4" />
<text x="1.29" y="342.79" font-size="8.5" fill="#3c3c3c" stroke="#3c3c3c" stroke-width="0.12" textLength="9.02" lengthAdjust="spacingAndGlyphs">18</text>
<line x1="0" y1="356.495" x2="14" y2="356.495" stroke="#e2e2e2" stroke-width="0.4" />
<text x="1.29" y="354.44" font-size="8.5" fill="#3c3c3c" stroke="#3c3c3c" stroke-width="0.12" textLength="9.02" lengthAdjust="spacingAndGlyphs">19</text>
<line x1="0" y1="368.15" x2="14" y2="368.15" stroke="#e2e2e2" stroke-width="0.4" />
<text x="1.29" y="366.1" font-size="8.5" fill="#3c3c3c" stroke="#3c3c3c" stroke-width="0.12" textLength="9.02" lengthAdjust="spacingAndGlyphs">20</text>
<line x1="0" y1="379.80499999999995" x2="14" y2="379.80499999999995" stroke="#e2e2e2" stroke-width="0.4" />
<text x="1.29" y="377.75" font-size="8.5" fill="#3c3c3c" stroke="#3c3c3c" stroke-width="0.12" textLength="9.02" lengthAdjust="spacingAndGlyphs">21</text>
<line x1="0" y1="391.46" x2="14" y2="391.46" stroke="#e2e2e2" stroke-width="0.4" />
<text x="1.29" y="389.41" font-size="8.5" fill="#3c3c3c" stroke="#3c3c3c" stroke-width="0.12" textLength="9.02" lengthAdjust="spacingAndGlyphs">22</text>
<line x1="0" y1="403.115" x2="14" y2="403.115" stroke="#e2e2e2" stroke-width="0.4" />
<text x="1.29" y="401.06" font-size="8.5" fill="#3c3c3c" stroke="#3c3c3c" stroke-width="0.12" textLength="9.02" lengthAdjust="spacingAndGlyphs">23</text>
<line x1="0" y1="414.77" x2="14" y2="414.77" stroke="#e2e2e2" stroke-width="0.4" />
<text x="1.29" y="412.72" font-size="8.5" fill="#3c3c3c" stroke="#3c3c3c" stroke-width="0.12" textLength="9.02" lengthAdjust="spacingAndGlyphs">24</text>
<line x1="0" y1="426.42499999999995" x2="14" y2="426.42499999999995" stroke="#e2e2e2" stroke-width="0.4" />
<text x="1.29" y="424.37" font-size="8.5" fill="#3c3c3c" stroke="#3c3c3c" stroke-width="0.12" textLength="9.02" lengthAdjust="spacingAndGlyphs">25</text>
<line x1="0" y1="438.08" x2="14" y2="438.08" stroke="#e2e2e2" stroke-width="0.4" />
<text x="1.29" y="436.03" font-size="8.5" fill="#3c3c3c" stroke="#3c3c3c" stroke-width="0.12" textLength="9.02" lengthAdjust="spacingAndGlyphs">26</text>
<line x1="0" y1="449.735" x2="14" y2="449.735" stroke="#e2e2e2" stroke-width="0.4" />
<text x="1.29" y="447.69" font-size="8.5" fill="#3c3c3c" stroke="#3c3c3c" stroke-width="0.12" textLength="9.02" lengthAdjust="spacingAndGlyphs">27</text>
<line x1="0" y1="461.39" x2="14" y2="461.39" stroke="#e2e2e2" stroke-width="0.4" />
<text x="1.29" y="459.34" font-size="8.5" fill="#3c3c3c" stroke="#3c3c3c" stroke-width="0.12" textLength="9.02" lengthAdjust="spacingAndGlyphs">28</text>
<line x1="0" y1="473.04499999999996" x2="14" y2="473.04499999999996" stroke="#e2e2e2" stroke-width="0.4" />
<text x="1.29" y="470.99" font-size="8.5" fill="#3c3c3c" stroke="#3c3c3c" stroke-width="0.12" textLength="9.02" lengthAdjust="spacingAndGlyphs">29</text>
<line x1="0" y1="484.7" x2="14" y2="484.7" stroke="#e2e2e2" stroke-width="0.4" />
<text x="1.29" y="482.65" font-size="8.5" fill="#3c3c3c" stroke="#3c3c3c" stroke-width="0.12" textLength="9.02" lengthAdjust="spacingAndGlyphs">30</text>
<line x1="0" y1="496.355" x2="14" y2="496.355" stroke="#e2e2e2" stroke-width="0.4" />
<text x="1.29" y="494.31" font-size="8.5" fill="#3c3c3c" stroke="#3c3c3c" stroke-width="0.12" textLength="9.02" lengthAdjust="spacingAndGlyphs">31</text>
<rect x="0" y="496.355" width="14" height="11.654999999999973" fill="#ebebeb"/>
<rect x="13" y="496.355" width="1" height="11.654999999999973" fill="#3f8a55"/>
<line x1="0" y1="508.01" x2="14" y2="508.01" stroke="#e2e2e2" stroke-width="0.4" />
<text x="1.29" y="505.96" font-size="8.5" fill="#3f8a55" stroke="#3f8a55" stroke-width="0.3" textLength="9.02" lengthAdjust="spacingAndGlyphs">32</text>
<line x1="0" y1="519.665" x2="14" y2="519.665" stroke="#e2e2e2" stroke-width="0.4" />
<text x="1.29" y="517.62" font-size="8.5" fill="#3c3c3c" stroke="#3c3c3c" stroke-width="0.12" textLength="9.02" lengthAdjust="spacingAndGlyphs">33</text>
<line x1="0" y1="531.3199999999999" x2="14" y2="531.3199999999999" stroke="#e2e2e2" stroke-width="0.4" />
<text x="1.29" y="529.27" font-size="8.5" fill="#3c3c3c" stroke="#3c3c3c" stroke-width="0.12" textLength="9.02" lengthAdjust="spacingAndGlyphs">34</text>
<line x1="14" y1="82" x2="14" y2="528" stroke="#dcdcdc" stroke-width="0.5" />
<rect x="14" y="82" width="246.2" height="42.8" fill="#18254e"/>
<text y="113.2" font-size="24.6" fill="#fff" font-weight="700" stroke="#fff" stroke-width="0.3" x="17.7" textLength="128.64" lengthAdjust="spacingAndGlyphs">Partitioning</text>
<rect x="260.2" y="82" width="693.5" height="43" fill="#c4d69e"/>
<text y="100" font-size="9.23" fill="#161616" stroke="#161616" stroke-width="0.22"><tspan x="262.8" textLength="47.58" lengthAdjust="spacingAndGlyphs">Partitioning</tspan> <tspan x="312.66" textLength="6.26" lengthAdjust="spacingAndGlyphs">is</tspan> <tspan x="321.2" textLength="36.94" lengthAdjust="spacingAndGlyphs">powerful</tspan> <tspan x="360.43" textLength="51.6" lengthAdjust="spacingAndGlyphs">functionality</tspan> <tspan x="414.31" textLength="16.8" lengthAdjust="spacingAndGlyphs">that</tspan> <tspan x="433.39" textLength="25.82" lengthAdjust="spacingAndGlyphs">allows</tspan> <tspan x="461.49" textLength="27.19" lengthAdjust="spacingAndGlyphs">tables,</tspan> <tspan x="490.96" textLength="33.38" lengthAdjust="spacingAndGlyphs">indexes,</tspan> <tspan x="526.62" textLength="15.44" lengthAdjust="spacingAndGlyphs">and</tspan> <tspan x="544.34" textLength="64.74" lengthAdjust="spacingAndGlyphs">index-organized</tspan> <tspan x="611.35" textLength="24.67" lengthAdjust="spacingAndGlyphs">tables</tspan> <tspan x="638.31" textLength="8.6" lengthAdjust="spacingAndGlyphs">to</tspan> <tspan x="649.19" textLength="10.32" lengthAdjust="spacingAndGlyphs">be</tspan> <tspan x="661.8" textLength="44.66" lengthAdjust="spacingAndGlyphs">subdivided</tspan> <tspan x="708.74" textLength="16.13" lengthAdjust="spacingAndGlyphs">into</tspan> <tspan x="727.15" textLength="30.01" lengthAdjust="spacingAndGlyphs">smaller</tspan> <tspan x="759.44" textLength="28.39" lengthAdjust="spacingAndGlyphs">pieces,</tspan> <tspan x="790.11" textLength="35.14" lengthAdjust="spacingAndGlyphs">enabling</tspan> <tspan x="827.53" textLength="22.67" lengthAdjust="spacingAndGlyphs">these</tspan> <tspan x="852.48" textLength="37.23" lengthAdjust="spacingAndGlyphs">database</tspan> <tspan x="891.99" textLength="29.65" lengthAdjust="spacingAndGlyphs">objects</tspan> <tspan x="923.92" textLength="8.6" lengthAdjust="spacingAndGlyphs">to</tspan> <tspan x="934.81" textLength="10.32" lengthAdjust="spacingAndGlyphs">be</tspan></text>
<text y="113.3" font-size="9.24" fill="#161616" stroke="#161616" stroke-width="0.22"><tspan x="262.8" textLength="38.05" lengthAdjust="spacingAndGlyphs">managed</tspan> <tspan x="303.14" textLength="15.45" lengthAdjust="spacingAndGlyphs">and</tspan> <tspan x="320.87" textLength="36.64" lengthAdjust="spacingAndGlyphs">accessed</tspan> <tspan x="359.79" textLength="8.13" lengthAdjust="spacingAndGlyphs">at</tspan> <tspan x="370.2" textLength="4.84" lengthAdjust="spacingAndGlyphs">a</tspan> <tspan x="377.32" textLength="19.2" lengthAdjust="spacingAndGlyphs">finer</tspan> <tspan x="398.81" textLength="19.1" lengthAdjust="spacingAndGlyphs">level</tspan> <tspan x="420.19" textLength="8.41" lengthAdjust="spacingAndGlyphs">of</tspan> <tspan x="430.88" textLength="46.35" lengthAdjust="spacingAndGlyphs">granularity.</tspan></text>
<rect x="14" y="124.6" width="159.7" height="35.2" fill="#bccbe6"/>
<text y="134.3" font-size="8.34" fill="#0a0ae6" stroke="#0a0ae6" stroke-width="0.15"><tspan x="45.0" textLength="22.14" lengthAdjust="spacingAndGlyphs">TABLE</tspan> <tspan x="69.19" textLength="10.17" lengthAdjust="spacingAndGlyphs">OF</tspan> <tspan x="81.41" textLength="39.86" lengthAdjust="spacingAndGlyphs">CONTENTS</tspan></text>
<line x1="45" y1="135.6" x2="121.27" y2="135.6" stroke="#0a0ae6" stroke-width="0.65" />
<text y="145.9" font-size="8.34" fill="#0a0ae6" stroke="#0a0ae6" stroke-width="0.15"><tspan x="45.0" textLength="50.95" lengthAdjust="spacingAndGlyphs">DEPLOYMENT</tspan> <tspan x="98.0" textLength="14.04" lengthAdjust="spacingAndGlyphs">PER</tspan> <tspan x="114.09" textLength="37.64" lengthAdjust="spacingAndGlyphs">DATABASE</tspan></text>
<line x1="45" y1="147.3" x2="151.73" y2="147.3" stroke="#0a0ae6" stroke-width="0.65" />
<text y="157.3" font-size="8.34" fill="#0a0ae6" stroke="#0a0ae6" stroke-width="0.15"><tspan x="45.0" textLength="49.67" lengthAdjust="spacingAndGlyphs">COMPLIANCE</tspan> <tspan x="96.72" textLength="46.01" lengthAdjust="spacingAndGlyphs">ESTIMATION</tspan></text>
<line x1="45" y1="158.8" x2="142.73" y2="158.8" stroke="#0a0ae6" stroke-width="0.65" />
<circle cx="23.8" cy="130.5" r="5" fill="none" stroke="#1c1c1c" stroke-width="1"/>
<path d="M21.6 146.4 V130.2 A2.2 2.2 0 0 1 26 130.2 V137.6 C28 136.4 30.6 137 31 138.8 C32.8 138 35 139 35.2 140.8 C37 140.4 38.5 141.6 38.5 143.6 V148 C38.5 151.4 36 153 35.3 156.6 H23.7 C23.2 154.4 21.5 153 20 151.5 C18.4 150 17.4 147.4 16.6 144 C16 141.6 15.9 139.6 17.3 139.4 C19 140 20.5 143 21.6 146.4 Z" stroke="none" fill="#bccbe6" stroke-width="1" />
<path d="M21.6 146.4 V130.2 A2.2 2.2 0 0 1 26 130.2 V137.6 C28 136.4 30.6 137 31 138.8 C32.8 138 35 139 35.2 140.8 C37 140.4 38.5 141.6 38.5 143.6 V148 C38.5 151.4 36 153 35.3 156.6 M23.7 156.4 C23.2 154.4 21.5 153 20 151.5 C18.4 150 17.4 147.4 16.6 144 C16 141.6 15.9 139.6 17.3 139.4 C19 140 20.5 143 21.6 146.4" stroke="#1c1c1c" fill="none" stroke-width="1.1" stroke-linecap="round" stroke-linejoin="round"/>
<line x1="23" y1="130.4" x2="23" y2="145.6" stroke="#666" stroke-width="1.3" />
<rect x="14" y="159.8" width="939.7" height="14.8" fill="#c4d69e"/>
<text y="170.8" font-size="9.23" fill="#1b2a4e" font-weight="700" stroke="#1b2a4e" stroke-width="0.18"><tspan x="15.6" textLength="48.78" lengthAdjust="spacingAndGlyphs">Partitioning</tspan> <tspan x="66.65" textLength="21.25" lengthAdjust="spacingAndGlyphs">[only</tspan> <tspan x="90.16" textLength="16.37" lengthAdjust="spacingAndGlyphs">first</tspan> <tspan x="108.8" textLength="10.17" lengthAdjust="spacingAndGlyphs">10</tspan> <tspan x="121.23" textLength="30.87" lengthAdjust="spacingAndGlyphs">records</tspan> <tspan x="154.37" textLength="14.0" lengthAdjust="spacingAndGlyphs">per</tspan> <tspan x="170.63" textLength="37.96" lengthAdjust="spacingAndGlyphs">database</tspan> <tspan x="210.86" textLength="13.45" lengthAdjust="spacingAndGlyphs">are</tspan> <tspan x="226.58" textLength="30.87" lengthAdjust="spacingAndGlyphs">shown]</tspan></text>
<rect x="260.4" y="186.3" width="563" height="14.1" fill="#e08e58"/>
<rect x="260.6" y="200.2" width="562.6" height="25.8" fill="#fff" stroke="#f0b48c" stroke-width="0.5"/>
<text y="196.6" font-size="8.35" fill="#fff" font-weight="700" stroke="#fff" stroke-width="0.12"><tspan x="262.0" textLength="30.88" lengthAdjust="spacingAndGlyphs">StandBy</tspan> <tspan x="294.93" textLength="38.83" lengthAdjust="spacingAndGlyphs">Databases</tspan> <tspan x="335.82" textLength="23.44" lengthAdjust="spacingAndGlyphs">notice</tspan></text>
<text y="210.5" font-size="8.21" fill="#0c0c0c" font-weight="700" stroke="#0c0c0c" stroke-width="0.18"><tspan x="262.0" textLength="40.05" lengthAdjust="spacingAndGlyphs">Important:</tspan> <tspan x="304.07" textLength="5.4" lengthAdjust="spacingAndGlyphs">A</tspan> <tspan x="311.49" textLength="29.4" lengthAdjust="spacingAndGlyphs">standby</tspan> <tspan x="342.91" textLength="49.28" lengthAdjust="spacingAndGlyphs">configuration</tspan> <tspan x="394.21" textLength="14.51" lengthAdjust="spacingAndGlyphs">was</tspan> <tspan x="410.74" textLength="35.07" lengthAdjust="spacingAndGlyphs">detected.</tspan> <tspan x="447.83" textLength="18.15" lengthAdjust="spacingAndGlyphs">Note</tspan> <tspan x="467.99" textLength="15.29" lengthAdjust="spacingAndGlyphs">that</tspan> <tspan x="485.3" textLength="21.37" lengthAdjust="spacingAndGlyphs">usage</tspan> <tspan x="508.69" textLength="24.57" lengthAdjust="spacingAndGlyphs">details</tspan> <tspan x="535.27" textLength="10.65" lengthAdjust="spacingAndGlyphs">for</tspan> <tspan x="547.94" textLength="13.63" lengthAdjust="spacingAndGlyphs">this</tspan> <tspan x="563.59" textLength="24.35" lengthAdjust="spacingAndGlyphs">option</tspan> <tspan x="589.96" textLength="12.67" lengthAdjust="spacingAndGlyphs">not</tspan> <tspan x="604.65" textLength="20.1" lengthAdjust="spacingAndGlyphs">listed</tspan> <tspan x="626.77" textLength="18.76" lengthAdjust="spacingAndGlyphs">since</tspan> <tspan x="647.54" textLength="5.28" lengthAdjust="spacingAndGlyphs">it</tspan> <tspan x="654.84" textLength="5.75" lengthAdjust="spacingAndGlyphs">is</tspan> <tspan x="662.61" textLength="42.6" lengthAdjust="spacingAndGlyphs">unavailable</tspan> <tspan x="707.22" textLength="9.58" lengthAdjust="spacingAndGlyphs">on</tspan> <tspan x="718.82" textLength="33.76" lengthAdjust="spacingAndGlyphs">database</tspan> <tspan x="754.6" textLength="34.41" lengthAdjust="spacingAndGlyphs">instances</tspan></text>
<text y="222.1" font-size="8.21" fill="#0c0c0c" font-weight="700" stroke="#0c0c0c" stroke-width="0.18"><tspan x="262.0" textLength="39.53" lengthAdjust="spacingAndGlyphs">configured</tspan> <tspan x="303.55" textLength="6.98" lengthAdjust="spacingAndGlyphs">in</tspan> <tspan x="312.54" textLength="29.4" lengthAdjust="spacingAndGlyphs">standby</tspan> <tspan x="343.96" textLength="23.71" lengthAdjust="spacingAndGlyphs">mode.</tspan> <tspan x="369.69" textLength="23.88" lengthAdjust="spacingAndGlyphs">Please</tspan> <tspan x="395.59" textLength="17.82" lengthAdjust="spacingAndGlyphs">refer</tspan> <tspan x="415.43" textLength="7.8" lengthAdjust="spacingAndGlyphs">to</tspan> <tspan x="425.25" textLength="36.67" lengthAdjust="spacingAndGlyphs">'Database</tspan> <tspan x="463.94" textLength="47.69" lengthAdjust="spacingAndGlyphs">Deployment'</tspan> <tspan x="513.64" textLength="20.36" lengthAdjust="spacingAndGlyphs">sheet</tspan> <tspan x="536.02" textLength="7.8" lengthAdjust="spacingAndGlyphs">to</tspan> <tspan x="545.83" textLength="12.54" lengthAdjust="spacingAndGlyphs">see</tspan> <tspan x="560.39" textLength="5.01" lengthAdjust="spacingAndGlyphs">if</tspan> <tspan x="567.42" textLength="12.37" lengthAdjust="spacingAndGlyphs">the</tspan> <tspan x="581.81" textLength="29.4" lengthAdjust="spacingAndGlyphs">standby</tspan> <tspan x="613.23" textLength="33.76" lengthAdjust="spacingAndGlyphs">database</tspan> <tspan x="649.0" textLength="22.11" lengthAdjust="spacingAndGlyphs">needs</tspan> <tspan x="673.13" textLength="29.0" lengthAdjust="spacingAndGlyphs">licenses</tspan> <tspan x="704.15" textLength="10.65" lengthAdjust="spacingAndGlyphs">for</tspan> <tspan x="716.82" textLength="13.63" lengthAdjust="spacingAndGlyphs">this</tspan> <tspan x="732.46" textLength="26.73" lengthAdjust="spacingAndGlyphs">option.</tspan></text>
<rect x="14" y="237.3" width="939.7" height="14.5" fill="#5185bb"/>
<text y="248.4" font-size="9.05" fill="#fff" font-weight="700" stroke="#fff" stroke-width="0.1"><tspan x="45.8" textLength="19.12" lengthAdjust="spacingAndGlyphs">Host</tspan> <tspan x="67.2" textLength="24.82" lengthAdjust="spacingAndGlyphs">Name</tspan></text>
<text y="248.4" font-size="9.05" fill="#fff" font-weight="700" stroke="#fff" stroke-width="0.1" x="175.6" textLength="11.97" lengthAdjust="spacingAndGlyphs">DB</text>
<text y="248.4" font-size="9.05" fill="#fff" font-weight="700" stroke="#fff" stroke-width="0.1"><tspan x="262.4" textLength="36.59" lengthAdjust="spacingAndGlyphs">Segment</tspan> <tspan x="301.27" textLength="19.88" lengthAdjust="spacingAndGlyphs">Type</tspan></text>
<text y="248.4" font-size="9.05" fill="#fff" font-weight="700" stroke="#fff" stroke-width="0.1"><tspan x="348.8" textLength="36.59" lengthAdjust="spacingAndGlyphs">Segment</tspan> <tspan x="387.67" textLength="24.82" lengthAdjust="spacingAndGlyphs">Name</tspan></text>
<text y="248.4" font-size="9.05" fill="#fff" font-weight="700" stroke="#fff" stroke-width="0.1" x="609" textLength="28.31" lengthAdjust="spacingAndGlyphs">Owner</text>
<text y="248.4" font-size="9.05" fill="#fff" font-weight="700" stroke="#fff" stroke-width="0.1"><tspan x="695.6" textLength="16.65" lengthAdjust="spacingAndGlyphs">Min</tspan> <tspan x="714.52" textLength="31.41" lengthAdjust="spacingAndGlyphs">created</tspan></text>
<text y="248.4" font-size="9.05" fill="#fff" font-weight="700" stroke="#fff" stroke-width="0.1"><tspan x="825.6" textLength="16.65" lengthAdjust="spacingAndGlyphs">Min</tspan> <tspan x="844.52" textLength="16.59" lengthAdjust="spacingAndGlyphs">Last</tspan> <tspan x="863.38" textLength="11.27" lengthAdjust="spacingAndGlyphs">Dll</tspan> <tspan x="876.93" textLength="19.12" lengthAdjust="spacingAndGlyphs">time</tspan></text>
<text y="248.4" font-size="9.05" fill="#fff" font-weight="700" stroke="#fff" stroke-width="0.1"><tspan x="512.6" textLength="22.3" lengthAdjust="spacingAndGlyphs">Rows</tspan> <tspan x="537.17" textLength="34.21" lengthAdjust="spacingAndGlyphs">Number</tspan></text>
<text y="260.65" font-size="8.27" fill="#0a0a0a" stroke="#0a0a0a" stroke-width="0.25" x="45.6" textLength="24.62" lengthAdjust="spacingAndGlyphs">hydrus</text>
<text y="260.65" font-size="8.27" fill="#0a0a0a" stroke="#0a0a0a" stroke-width="0.25" x="175.7" textLength="20.56" lengthAdjust="spacingAndGlyphs">rox09</text>
<text y="260.65" font-size="8.27" fill="#0a0a0a" stroke="#0a0a0a" stroke-width="0.25" x="261.8" textLength="49.49" lengthAdjust="spacingAndGlyphs">OBJECT_TYPE</text>
<text x="348.5" y="260.65" font-size="8.27" fill="#0a0a0a" stroke="#0a0a0a" stroke-width="0.25" textLength="74.75" lengthAdjust="spacingAndGlyphs">OBJECT_NAME1-128</text>
<text x="608.7" y="260.65" font-size="8.27" fill="#0a0a0a" stroke="#0a0a0a" stroke-width="0.25" textLength="44.35" lengthAdjust="spacingAndGlyphs">OWNER-128</text>
<text x="695.1" y="260.65" font-size="8.27" fill="#0a0a0a" stroke="#0a0a0a" stroke-width="0.25" textLength="74.37" lengthAdjust="spacingAndGlyphs">2014-05-31 12:34:55</text>
<text x="825.0" y="260.65" font-size="8.27" fill="#0a0a0a" stroke="#0a0a0a" stroke-width="0.25" textLength="74.37" lengthAdjust="spacingAndGlyphs">2018-05-31 12:34:55</text>
<text y="272.31" font-size="8.27" fill="#0a0a0a" stroke="#0a0a0a" stroke-width="0.25" x="45.6" textLength="24.62" lengthAdjust="spacingAndGlyphs">hydrus</text>
<text y="272.31" font-size="8.27" fill="#0a0a0a" stroke="#0a0a0a" stroke-width="0.25" x="175.7" textLength="20.56" lengthAdjust="spacingAndGlyphs">rox09</text>
<text y="272.31" font-size="8.27" fill="#0a0a0a" stroke="#0a0a0a" stroke-width="0.25" x="261.8" textLength="49.49" lengthAdjust="spacingAndGlyphs">OBJECT_TYPE</text>
<text x="348.5" y="272.31" font-size="8.27" fill="#0a0a0a" stroke="#0a0a0a" stroke-width="0.25" textLength="74.75" lengthAdjust="spacingAndGlyphs">OBJECT_NAME2-128</text>
<text x="608.7" y="272.31" font-size="8.27" fill="#0a0a0a" stroke="#0a0a0a" stroke-width="0.25" textLength="44.35" lengthAdjust="spacingAndGlyphs">OWNER-128</text>
<text x="695.1" y="272.31" font-size="8.27" fill="#0a0a0a" stroke="#0a0a0a" stroke-width="0.25" textLength="74.37" lengthAdjust="spacingAndGlyphs">2014-05-31 12:34:55</text>
<text x="825.0" y="272.31" font-size="8.27" fill="#0a0a0a" stroke="#0a0a0a" stroke-width="0.25" textLength="74.37" lengthAdjust="spacingAndGlyphs">2018-05-31 12:34:55</text>
<text y="283.96" font-size="8.27" fill="#0a0a0a" stroke="#0a0a0a" stroke-width="0.25" x="45.6" textLength="24.62" lengthAdjust="spacingAndGlyphs">hydrus</text>
<text y="283.96" font-size="8.27" fill="#0a0a0a" stroke="#0a0a0a" stroke-width="0.25" x="175.7" textLength="20.56" lengthAdjust="spacingAndGlyphs">rox09</text>
<text y="283.96" font-size="8.27" fill="#0a0a0a" stroke="#0a0a0a" stroke-width="0.25" x="261.8" textLength="49.49" lengthAdjust="spacingAndGlyphs">OBJECT_TYPE</text>
<text x="348.5" y="283.96" font-size="8.27" fill="#0a0a0a" stroke="#0a0a0a" stroke-width="0.25" textLength="74.75" lengthAdjust="spacingAndGlyphs">OBJECT_NAME3-128</text>
<text x="608.7" y="283.96" font-size="8.27" fill="#0a0a0a" stroke="#0a0a0a" stroke-width="0.25" textLength="48.91" lengthAdjust="spacingAndGlyphs">OWNER2-128</text>
<text x="695.1" y="283.96" font-size="8.27" fill="#0a0a0a" stroke="#0a0a0a" stroke-width="0.25" textLength="74.37" lengthAdjust="spacingAndGlyphs">2014-05-31 12:34:55</text>
<text x="825.0" y="283.96" font-size="8.27" fill="#0a0a0a" stroke="#0a0a0a" stroke-width="0.25" textLength="74.37" lengthAdjust="spacingAndGlyphs">2018-05-31 12:34:55</text>
<text y="295.62" font-size="8.27" fill="#0a0a0a" stroke="#0a0a0a" stroke-width="0.25" x="45.6" textLength="24.62" lengthAdjust="spacingAndGlyphs">hydrus</text>
<text y="295.62" font-size="8.27" fill="#0a0a0a" stroke="#0a0a0a" stroke-width="0.25" x="175.7" textLength="20.56" lengthAdjust="spacingAndGlyphs">rox09</text>
<text y="295.62" font-size="8.27" fill="#0a0a0a" stroke="#0a0a0a" stroke-width="0.25" x="261.8" textLength="49.49" lengthAdjust="spacingAndGlyphs">OBJECT_TYPE</text>
<text x="348.5" y="295.62" font-size="8.27" fill="#0a0a0a" stroke="#0a0a0a" stroke-width="0.25" textLength="74.75" lengthAdjust="spacingAndGlyphs">OBJECT_NAME4-128</text>
<text x="608.7" y="295.62" font-size="8.27" fill="#0a0a0a" stroke="#0a0a0a" stroke-width="0.25" textLength="48.91" lengthAdjust="spacingAndGlyphs">OWNER2-128</text>
<text x="695.1" y="295.62" font-size="8.27" fill="#0a0a0a" stroke="#0a0a0a" stroke-width="0.25" textLength="74.37" lengthAdjust="spacingAndGlyphs">2014-05-31 12:34:55</text>
<text x="825.0" y="295.62" font-size="8.27" fill="#0a0a0a" stroke="#0a0a0a" stroke-width="0.25" textLength="74.37" lengthAdjust="spacingAndGlyphs">2018-05-31 12:34:55</text>
<text y="307.27" font-size="8.27" fill="#0a0a0a" stroke="#0a0a0a" stroke-width="0.25" x="45.6" textLength="24.62" lengthAdjust="spacingAndGlyphs">hydrus</text>
<text y="307.27" font-size="8.27" fill="#0a0a0a" stroke="#0a0a0a" stroke-width="0.25" x="175.7" textLength="20.56" lengthAdjust="spacingAndGlyphs">rox09</text>
<text y="307.27" font-size="8.27" fill="#0a0a0a" stroke="#0a0a0a" stroke-width="0.25" x="261.8" textLength="49.49" lengthAdjust="spacingAndGlyphs">OBJECT_TYPE</text>
<text x="348.5" y="307.27" font-size="8.27" fill="#0a0a0a" stroke="#0a0a0a" stroke-width="0.25" textLength="74.75" lengthAdjust="spacingAndGlyphs">OBJECT_NAME5-128</text>
<text x="608.7" y="307.27" font-size="8.27" fill="#0a0a0a" stroke="#0a0a0a" stroke-width="0.25" textLength="48.91" lengthAdjust="spacingAndGlyphs">OWNER3-128</text>
<text x="695.1" y="307.27" font-size="8.27" fill="#0a0a0a" stroke="#0a0a0a" stroke-width="0.25" textLength="74.37" lengthAdjust="spacingAndGlyphs">2014-05-31 12:34:55</text>
<text x="825.0" y="307.27" font-size="8.27" fill="#0a0a0a" stroke="#0a0a0a" stroke-width="0.25" textLength="74.37" lengthAdjust="spacingAndGlyphs">2018-05-31 12:34:55</text>
<text x="14.3" y="318.57" font-size="10.4" fill="#111" textLength="101.6" lengthAdjust="spacing">.............................................</text>
<text y="342.24" font-size="8.27" fill="#0a0a0a" stroke="#0a0a0a" stroke-width="0.25" x="45.6" textLength="29.91" lengthAdjust="spacingAndGlyphs">auriga-3</text>
<text y="342.24" font-size="8.27" fill="#0a0a0a" stroke="#0a0a0a" stroke-width="0.25" x="175.7" textLength="36.15" lengthAdjust="spacingAndGlyphs">gamma04</text>
<text y="342.24" font-size="8.27" fill="#0a0a0a" stroke="#0a0a0a" stroke-width="0.25"><tspan x="261.8" textLength="22.66" lengthAdjust="spacingAndGlyphs">INDEX</tspan> <tspan x="286.49" textLength="53.81" lengthAdjust="spacingAndGlyphs">SUBPARTITION</tspan></text>
<text y="342.24" font-size="8.27" fill="#0a0a0a" stroke="#0a0a0a" stroke-width="0.25" x="348.5" textLength="58.42" lengthAdjust="spacingAndGlyphs">IDX_TASK_TLI_5</text>
<text y="342.24" font-size="8.27" fill="#0a0a0a" stroke="#0a0a0a" stroke-width="0.25" x="608.7" textLength="66.08" lengthAdjust="spacingAndGlyphs">INO_TASK_MGMT</text>
<text x="695.1" y="342.24" font-size="8.27" fill="#0a0a0a" stroke="#0a0a0a" stroke-width="0.25" textLength="74.37" lengthAdjust="spacingAndGlyphs">2012-06-28 13:22:29</text>
<text x="825.0" y="342.24" font-size="8.27" fill="#0a0a0a" stroke="#0a0a0a" stroke-width="0.25" textLength="74.37" lengthAdjust="spacingAndGlyphs">2012-06-28 13:22:29</text>
<text y="353.89" font-size="8.27" fill="#0a0a0a" stroke="#0a0a0a" stroke-width="0.25" x="45.6" textLength="29.91" lengthAdjust="spacingAndGlyphs">auriga-3</text>
<text y="353.89" font-size="8.27" fill="#0a0a0a" stroke="#0a0a0a" stroke-width="0.25" x="175.7" textLength="36.15" lengthAdjust="spacingAndGlyphs">gamma04</text>
<text y="353.89" font-size="8.27" fill="#0a0a0a" stroke="#0a0a0a" stroke-width="0.25"><tspan x="261.8" textLength="22.66" lengthAdjust="spacingAndGlyphs">INDEX</tspan> <tspan x="286.49" textLength="53.81" lengthAdjust="spacingAndGlyphs">SUBPARTITION</tspan></text>
<text y="353.89" font-size="8.27" fill="#0a0a0a" stroke="#0a0a0a" stroke-width="0.25" x="348.5" textLength="58.42" lengthAdjust="spacingAndGlyphs">IDX_TASK_TLI_3</text>
<text y="353.89" font-size="8.27" fill="#0a0a0a" stroke="#0a0a0a" stroke-width="0.25" x="608.7" textLength="66.08" lengthAdjust="spacingAndGlyphs">INO_TASK_MGMT</text>
<text x="695.1" y="353.89" font-size="8.27" fill="#0a0a0a" stroke="#0a0a0a" stroke-width="0.25" textLength="74.37" lengthAdjust="spacingAndGlyphs">2014-06-04 12:53:11</text>
<text x="825.0" y="353.89" font-size="8.27" fill="#0a0a0a" stroke="#0a0a0a" stroke-width="0.25" textLength="74.37" lengthAdjust="spacingAndGlyphs">2014-06-04 12:53:11</text>
<text y="365.55" font-size="8.27" fill="#0a0a0a" stroke="#0a0a0a" stroke-width="0.25" x="45.6" textLength="29.91" lengthAdjust="spacingAndGlyphs">auriga-3</text>
<text y="365.55" font-size="8.27" fill="#0a0a0a" stroke="#0a0a0a" stroke-width="0.25" x="175.7" textLength="36.15" lengthAdjust="spacingAndGlyphs">gamma04</text>
<text y="365.55" font-size="8.27" fill="#0a0a0a" stroke="#0a0a0a" stroke-width="0.25"><tspan x="261.8" textLength="21.94" lengthAdjust="spacingAndGlyphs">TABLE</tspan> <tspan x="285.77" textLength="53.81" lengthAdjust="spacingAndGlyphs">SUBPARTITION</tspan></text>
<text y="365.55" font-size="8.27" fill="#0a0a0a" stroke="#0a0a0a" stroke-width="0.25" x="348.5" textLength="32.58" lengthAdjust="spacingAndGlyphs">TASK_TLI</text>
<text y="365.55" font-size="8.27" fill="#0a0a0a" stroke="#0a0a0a" stroke-width="0.25" x="608.7" textLength="66.08" lengthAdjust="spacingAndGlyphs">INO_TASK_MGMT</text>
<text x="695.1" y="365.55" font-size="8.27" fill="#0a0a0a" stroke="#0a0a0a" stroke-width="0.25" textLength="74.37" lengthAdjust="spacingAndGlyphs">2012-06-28 13:22:29</text>
<text x="825.0" y="365.55" font-size="8.27" fill="#0a0a0a" stroke="#0a0a0a" stroke-width="0.25" textLength="74.37" lengthAdjust="spacingAndGlyphs">2012-06-28 13:22:29</text>
<text y="377.2" font-size="8.27" fill="#0a0a0a" stroke="#0a0a0a" stroke-width="0.25" x="45.6" textLength="29.91" lengthAdjust="spacingAndGlyphs">auriga-3</text>
<text y="377.2" font-size="8.27" fill="#0a0a0a" stroke="#0a0a0a" stroke-width="0.25" x="175.7" textLength="36.15" lengthAdjust="spacingAndGlyphs">gamma04</text>
<text y="377.2" font-size="8.27" fill="#0a0a0a" stroke="#0a0a0a" stroke-width="0.25"><tspan x="261.8" textLength="22.66" lengthAdjust="spacingAndGlyphs">INDEX</tspan> <tspan x="286.49" textLength="53.81" lengthAdjust="spacingAndGlyphs">SUBPARTITION</tspan></text>
<text y="377.2" font-size="8.27" fill="#0a0a0a" stroke="#0a0a0a" stroke-width="0.25" x="348.5" textLength="58.42" lengthAdjust="spacingAndGlyphs">IDX_TASK_TLI_4</text>
<text y="377.2" font-size="8.27" fill="#0a0a0a" stroke="#0a0a0a" stroke-width="0.25" x="608.7" textLength="66.08" lengthAdjust="spacingAndGlyphs">INO_TASK_MGMT</text>
<text x="695.1" y="377.2" font-size="8.27" fill="#0a0a0a" stroke="#0a0a0a" stroke-width="0.25" textLength="74.37" lengthAdjust="spacingAndGlyphs">2012-06-28 13:22:29</text>
<text x="825.0" y="377.2" font-size="8.27" fill="#0a0a0a" stroke="#0a0a0a" stroke-width="0.25" textLength="74.37" lengthAdjust="spacingAndGlyphs">2012-06-28 13:22:29</text>
<text y="388.85" font-size="8.27" fill="#0a0a0a" stroke="#0a0a0a" stroke-width="0.25" x="45.6" textLength="29.91" lengthAdjust="spacingAndGlyphs">auriga-3</text>
<text y="388.85" font-size="8.27" fill="#0a0a0a" stroke="#0a0a0a" stroke-width="0.25" x="175.7" textLength="36.15" lengthAdjust="spacingAndGlyphs">gamma04</text>
<text y="388.85" font-size="8.27" fill="#0a0a0a" stroke="#0a0a0a" stroke-width="0.25"><tspan x="261.8" textLength="22.66" lengthAdjust="spacingAndGlyphs">INDEX</tspan> <tspan x="286.49" textLength="53.81" lengthAdjust="spacingAndGlyphs">SUBPARTITION</tspan></text>
<text y="388.85" font-size="8.27" fill="#0a0a0a" stroke="#0a0a0a" stroke-width="0.25" x="348.5" textLength="58.42" lengthAdjust="spacingAndGlyphs">IDX_TASK_TLI_1</text>
<text y="388.85" font-size="8.27" fill="#0a0a0a" stroke="#0a0a0a" stroke-width="0.25" x="608.7" textLength="66.08" lengthAdjust="spacingAndGlyphs">INO_TASK_MGMT</text>
<text x="695.1" y="388.85" font-size="8.27" fill="#0a0a0a" stroke="#0a0a0a" stroke-width="0.25" textLength="74.37" lengthAdjust="spacingAndGlyphs">2012-06-28 13:22:29</text>
<text x="825.0" y="388.85" font-size="8.27" fill="#0a0a0a" stroke="#0a0a0a" stroke-width="0.25" textLength="74.37" lengthAdjust="spacingAndGlyphs">2012-06-28 13:22:29</text>
<text y="400.51" font-size="8.27" fill="#0a0a0a" stroke="#0a0a0a" stroke-width="0.25" x="45.6" textLength="29.91" lengthAdjust="spacingAndGlyphs">auriga-3</text>
<text y="400.51" font-size="8.27" fill="#0a0a0a" stroke="#0a0a0a" stroke-width="0.25" x="175.7" textLength="36.15" lengthAdjust="spacingAndGlyphs">gamma04</text>
<text y="400.51" font-size="8.27" fill="#0a0a0a" stroke="#0a0a0a" stroke-width="0.25"><tspan x="261.8" textLength="22.66" lengthAdjust="spacingAndGlyphs">INDEX</tspan> <tspan x="286.49" textLength="53.81" lengthAdjust="spacingAndGlyphs">SUBPARTITION</tspan></text>
<text y="400.51" font-size="8.27" fill="#0a0a0a" stroke="#0a0a0a" stroke-width="0.25" x="348.5" textLength="58.42" lengthAdjust="spacingAndGlyphs">IDX_TASK_TLI_2</text>
<text y="400.51" font-size="8.27" fill="#0a0a0a" stroke="#0a0a0a" stroke-width="0.25" x="608.7" textLength="66.08" lengthAdjust="spacingAndGlyphs">INO_TASK_MGMT</text>
<text x="695.1" y="400.51" font-size="8.27" fill="#0a0a0a" stroke="#0a0a0a" stroke-width="0.25" textLength="74.37" lengthAdjust="spacingAndGlyphs">2012-06-28 13:22:29</text>
<text x="825.0" y="400.51" font-size="8.27" fill="#0a0a0a" stroke="#0a0a0a" stroke-width="0.25" textLength="74.37" lengthAdjust="spacingAndGlyphs">2012-06-28 13:22:29</text>
<text y="412.17" font-size="8.27" fill="#0a0a0a" stroke="#0a0a0a" stroke-width="0.25" x="45.6" textLength="29.91" lengthAdjust="spacingAndGlyphs">auriga-3</text>
<text y="412.17" font-size="8.27" fill="#0a0a0a" stroke="#0a0a0a" stroke-width="0.25" x="175.7" textLength="36.15" lengthAdjust="spacingAndGlyphs">gamma04</text>
<text y="412.17" font-size="8.27" fill="#0a0a0a" stroke="#0a0a0a" stroke-width="0.25"><tspan x="261.8" textLength="22.66" lengthAdjust="spacingAndGlyphs">INDEX</tspan> <tspan x="286.49" textLength="53.81" lengthAdjust="spacingAndGlyphs">SUBPARTITION</tspan></text>
<text y="412.17" font-size="8.27" fill="#0a0a0a" stroke="#0a0a0a" stroke-width="0.25" x="348.5" textLength="58.42" lengthAdjust="spacingAndGlyphs">IDX_TASK_TLI_6</text>
<text y="412.17" font-size="8.27" fill="#0a0a0a" stroke="#0a0a0a" stroke-width="0.25" x="608.7" textLength="66.08" lengthAdjust="spacingAndGlyphs">INO_TASK_MGMT</text>
<text x="695.1" y="412.17" font-size="8.27" fill="#0a0a0a" stroke="#0a0a0a" stroke-width="0.25" textLength="74.37" lengthAdjust="spacingAndGlyphs">2012-06-28 13:22:29</text>
<text x="825.0" y="412.17" font-size="8.27" fill="#0a0a0a" stroke="#0a0a0a" stroke-width="0.25" textLength="74.37" lengthAdjust="spacingAndGlyphs">2012-06-28 13:22:29</text>
<text x="14.3" y="423.47" font-size="10.4" fill="#111" textLength="101.6" lengthAdjust="spacing">.............................................</text>
<text y="447.13" font-size="8.27" fill="#0a0a0a" stroke="#0a0a0a" stroke-width="0.25" x="45.6" textLength="44.6" lengthAdjust="spacingAndGlyphs">telescopium</text>
<text y="447.13" font-size="8.27" fill="#0a0a0a" stroke="#0a0a0a" stroke-width="0.25" x="175.7" textLength="31.11" lengthAdjust="spacingAndGlyphs">kappa12</text>
<text y="447.13" font-size="8.27" fill="#0a0a0a" stroke="#0a0a0a" stroke-width="0.25" x="261.8" textLength="49.49" lengthAdjust="spacingAndGlyphs">OBJECT_TYPE</text>
<text x="348.5" y="447.13" font-size="8.27" fill="#0a0a0a" stroke="#0a0a0a" stroke-width="0.25" textLength="70.59" lengthAdjust="spacingAndGlyphs">OBJECT_NAME1-54</text>
<text x="608.7" y="447.13" font-size="8.27" fill="#0a0a0a" stroke="#0a0a0a" stroke-width="0.25" textLength="40.19" lengthAdjust="spacingAndGlyphs">OWNER-54</text>
<text x="695.1" y="447.13" font-size="8.27" fill="#0a0a0a" stroke="#0a0a0a" stroke-width="0.25" textLength="74.37" lengthAdjust="spacingAndGlyphs">2014-05-31 12:34:55</text>
<text x="825.0" y="447.13" font-size="8.27" fill="#0a0a0a" stroke="#0a0a0a" stroke-width="0.25" textLength="74.37" lengthAdjust="spacingAndGlyphs">2018-05-31 12:34:55</text>
<text y="458.79" font-size="8.27" fill="#0a0a0a" stroke="#0a0a0a" stroke-width="0.25" x="45.6" textLength="44.6" lengthAdjust="spacingAndGlyphs">telescopium</text>
<text y="458.79" font-size="8.27" fill="#0a0a0a" stroke="#0a0a0a" stroke-width="0.25" x="175.7" textLength="31.11" lengthAdjust="spacingAndGlyphs">kappa12</text>
<text y="458.79" font-size="8.27" fill="#0a0a0a" stroke="#0a0a0a" stroke-width="0.25" x="261.8" textLength="49.49" lengthAdjust="spacingAndGlyphs">OBJECT_TYPE</text>
<text x="348.5" y="458.79" font-size="8.27" fill="#0a0a0a" stroke="#0a0a0a" stroke-width="0.25" textLength="70.59" lengthAdjust="spacingAndGlyphs">OBJECT_NAME2-54</text>
<text x="608.7" y="458.79" font-size="8.27" fill="#0a0a0a" stroke="#0a0a0a" stroke-width="0.25" textLength="40.19" lengthAdjust="spacingAndGlyphs">OWNER-54</text>
<text x="695.1" y="458.79" font-size="8.27" fill="#0a0a0a" stroke="#0a0a0a" stroke-width="0.25" textLength="74.37" lengthAdjust="spacingAndGlyphs">2014-05-31 12:34:55</text>
<text x="825.0" y="458.79" font-size="8.27" fill="#0a0a0a" stroke="#0a0a0a" stroke-width="0.25" textLength="74.37" lengthAdjust="spacingAndGlyphs">2018-05-31 12:34:55</text>
<text y="470.44" font-size="8.27" fill="#0a0a0a" stroke="#0a0a0a" stroke-width="0.25" x="45.6" textLength="44.6" lengthAdjust="spacingAndGlyphs">telescopium</text>
<text y="470.44" font-size="8.27" fill="#0a0a0a" stroke="#0a0a0a" stroke-width="0.25" x="175.7" textLength="31.11" lengthAdjust="spacingAndGlyphs">kappa12</text>
<text y="470.44" font-size="8.27" fill="#0a0a0a" stroke="#0a0a0a" stroke-width="0.25" x="261.8" textLength="49.49" lengthAdjust="spacingAndGlyphs">OBJECT_TYPE</text>
<text x="348.5" y="470.44" font-size="8.27" fill="#0a0a0a" stroke="#0a0a0a" stroke-width="0.25" textLength="70.59" lengthAdjust="spacingAndGlyphs">OBJECT_NAME3-54</text>
<text x="608.7" y="470.44" font-size="8.27" fill="#0a0a0a" stroke="#0a0a0a" stroke-width="0.25" textLength="44.75" lengthAdjust="spacingAndGlyphs">OWNER2-54</text>
<text x="695.1" y="470.44" font-size="8.27" fill="#0a0a0a" stroke="#0a0a0a" stroke-width="0.25" textLength="74.37" lengthAdjust="spacingAndGlyphs">2014-05-31 12:34:55</text>
<text x="825.0" y="470.44" font-size="8.27" fill="#0a0a0a" stroke="#0a0a0a" stroke-width="0.25" textLength="74.37" lengthAdjust="spacingAndGlyphs">2018-05-31 12:34:55</text>
<text y="482.09" font-size="8.27" fill="#0a0a0a" stroke="#0a0a0a" stroke-width="0.25" x="45.6" textLength="44.6" lengthAdjust="spacingAndGlyphs">telescopium</text>
<text y="482.09" font-size="8.27" fill="#0a0a0a" stroke="#0a0a0a" stroke-width="0.25" x="175.7" textLength="31.11" lengthAdjust="spacingAndGlyphs">kappa12</text>
<text y="482.09" font-size="8.27" fill="#0a0a0a" stroke="#0a0a0a" stroke-width="0.25" x="261.8" textLength="49.49" lengthAdjust="spacingAndGlyphs">OBJECT_TYPE</text>
<text x="348.5" y="482.09" font-size="8.27" fill="#0a0a0a" stroke="#0a0a0a" stroke-width="0.25" textLength="70.59" lengthAdjust="spacingAndGlyphs">OBJECT_NAME4-54</text>
<text x="608.7" y="482.09" font-size="8.27" fill="#0a0a0a" stroke="#0a0a0a" stroke-width="0.25" textLength="44.75" lengthAdjust="spacingAndGlyphs">OWNER2-54</text>
<text x="695.1" y="482.09" font-size="8.27" fill="#0a0a0a" stroke="#0a0a0a" stroke-width="0.25" textLength="74.37" lengthAdjust="spacingAndGlyphs">2014-05-31 12:34:55</text>
<text x="825.0" y="482.09" font-size="8.27" fill="#0a0a0a" stroke="#0a0a0a" stroke-width="0.25" textLength="74.37" lengthAdjust="spacingAndGlyphs">2018-05-31 12:34:55</text>
<text y="493.75" font-size="8.27" fill="#0a0a0a" stroke="#0a0a0a" stroke-width="0.25" x="45.6" textLength="44.6" lengthAdjust="spacingAndGlyphs">telescopium</text>
<text y="493.75" font-size="8.27" fill="#0a0a0a" stroke="#0a0a0a" stroke-width="0.25" x="175.7" textLength="31.11" lengthAdjust="spacingAndGlyphs">kappa12</text>
<text y="493.75" font-size="8.27" fill="#0a0a0a" stroke="#0a0a0a" stroke-width="0.25" x="261.8" textLength="49.49" lengthAdjust="spacingAndGlyphs">OBJECT_TYPE</text>
<text x="348.5" y="493.75" font-size="8.27" fill="#0a0a0a" stroke="#0a0a0a" stroke-width="0.25" textLength="70.59" lengthAdjust="spacingAndGlyphs">OBJECT_NAME5-54</text>
<text x="608.7" y="493.75" font-size="8.27" fill="#0a0a0a" stroke="#0a0a0a" stroke-width="0.25" textLength="44.75" lengthAdjust="spacingAndGlyphs">OWNER3-54</text>
<text x="695.1" y="493.75" font-size="8.27" fill="#0a0a0a" stroke="#0a0a0a" stroke-width="0.25" textLength="74.37" lengthAdjust="spacingAndGlyphs">2014-05-31 12:34:55</text>
<text x="825.0" y="493.75" font-size="8.27" fill="#0a0a0a" stroke="#0a0a0a" stroke-width="0.25" textLength="74.37" lengthAdjust="spacingAndGlyphs">2018-05-31 12:34:55</text>
<text x="14.3" y="505.06" font-size="10.4" fill="#111" textLength="101.6" lengthAdjust="spacing">.............................................</text>
<text y="528.71" font-size="8.27" fill="#0a0a0a" stroke="#0a0a0a" stroke-width="0.25" x="45.6" textLength="24.8" lengthAdjust="spacingAndGlyphs">aries-3</text>
<text y="528.71" font-size="8.27" fill="#0a0a0a" stroke="#0a0a0a" stroke-width="0.25" x="175.7" textLength="31.78" lengthAdjust="spacingAndGlyphs">kepler28</text>
<text y="528.71" font-size="8.27" fill="#0a0a0a" stroke="#0a0a0a" stroke-width="0.25"><tspan x="261.8" textLength="22.66" lengthAdjust="spacingAndGlyphs">INDEX</tspan> <tspan x="286.49" textLength="53.81" lengthAdjust="spacingAndGlyphs">SUBPARTITION</tspan></text>
<text y="528.71" font-size="8.27" fill="#0a0a0a" stroke="#0a0a0a" stroke-width="0.25" x="348.5" textLength="58.42" lengthAdjust="spacingAndGlyphs">IDX_TASK_TLI_3</text>
<text y="528.71" font-size="8.27" fill="#0a0a0a" stroke="#0a0a0a" stroke-width="0.25" x="608.7" textLength="66.08" lengthAdjust="spacingAndGlyphs">INO_TASK_MGMT</text>
<text x="695.1" y="528.71" font-size="8.27" fill="#0a0a0a" stroke="#0a0a0a" stroke-width="0.25" textLength="74.37" lengthAdjust="spacingAndGlyphs">2014-08-31 00:52:26</text>
<text x="825.0" y="528.71" font-size="8.27" fill="#0a0a0a" stroke="#0a0a0a" stroke-width="0.25" textLength="74.37" lengthAdjust="spacingAndGlyphs">2020-12-07 14:23:10</text>
<rect x="991.4" y="496.2" width="33.6" height="11.8" fill="none" stroke="#3f8a55" stroke-width="0.9"/>
<rect x="0" y="527.8" width="1024" height="9.8" fill="#efefef"/>
<line x1="0" y1="527.8" x2="1024" y2="527.8" stroke="#d9d9d9" stroke-width="0.4" />
<path d="M6.4 531 L4 533 L6.4 535 Z" stroke="none" fill="#c4c4c4" stroke-width="1" />
<path d="M12.6 530.8 L15.2 533 L12.6 535.2 Z" stroke="none" fill="#3a3a3a" stroke-width="1" />
<rect x="23.2" y="529" width="28.8" height="7.9" fill="#a7a7a7"/>
<text x="37.6" y="534.9" font-size="5.05" fill="#111" text-anchor="middle" stroke="#111" stroke-width="0.12">Home</text>
<rect x="55" y="529" width="51" height="7.9" fill="#a7a7a7"/>
<text x="80.5" y="534.9" font-size="5.05" fill="#111" text-anchor="middle" stroke="#111" stroke-width="0.12">Table of Contents</text>
<rect x="109" y="529" width="55" height="7.9" fill="#8fa9d5"/>
<text x="136.5" y="534.9" font-size="5.05" fill="#111" text-anchor="middle" stroke="#111" stroke-width="0.12">Financial Summary</text>
<rect x="166.8" y="529" width="64.0" height="7.9" fill="#8fa9d5"/>
<text x="198.8" y="534.9" font-size="5.05" fill="#111" text-anchor="middle" stroke="#111" stroke-width="0.12">Compliance Estimation</text>
<rect x="232.8" y="529" width="74.19999999999999" height="7.9" fill="#fdf5c0"/>
<text x="269.9" y="534.9" font-size="5.05" fill="#111" text-anchor="middle" stroke="#111" stroke-width="0.12">Options &amp; Packs Summary</text>
<rect x="310" y="529" width="73" height="7.9" fill="#fdf5c0"/>
<text x="346.5" y="534.9" font-size="5.05" fill="#111" text-anchor="middle" stroke="#111" stroke-width="0.12">Deployment per Database</text>
<rect x="384.8" y="529" width="61.599999999999966" height="7.9" fill="#fdf5c0"/>
<text x="415.6" y="534.9" font-size="5.05" fill="#111" text-anchor="middle" stroke="#111" stroke-width="0.12">Deployment per Host</text>
<rect x="448" y="529" width="55" height="7.9" fill="#fdf5c0"/>
<text x="475.5" y="534.9" font-size="5.05" fill="#111" text-anchor="middle" stroke="#111" stroke-width="0.12">Data Guard &amp; RAC</text>
<rect x="504.8" y="529" width="29.599999999999966" height="7.9" fill="#fdf5c0"/>
<text x="519.6" y="534.9" font-size="5.05" fill="#111" text-anchor="middle" stroke="#111" stroke-width="0.12">RAC</text>
<rect x="535.4" y="527.6" width="40.0" height="9.4" fill="#fff"/>
<line x1="535.4" y1="537" x2="575.4" y2="537" stroke="#bdbdbd" stroke-width="0.4" />
<text x="555.4" y="534.9" font-size="5.05" fill="#3f8a55" font-weight="700" text-anchor="middle">Partitioning</text>
<rect x="576.4" y="529" width="67.39999999999998" height="7.9" fill="#fdf5c0"/>
<text x="610.0999999999999" y="534.9" font-size="5.05" fill="#111" text-anchor="middle" stroke="#111" stroke-width="0.12">Advanced Compression</text>
<rect x="645.4" y="529" width="55.60000000000002" height="7.9" fill="#fdf5c0"/>
<text x="673.2" y="534.9" font-size="5.05" fill="#111" text-anchor="middle" stroke="#111" stroke-width="0.12">Advanced Security</text>
<rect x="703" y="529" width="68.39999999999998" height="7.9" fill="#fdf5c0"/>
<text x="737.2" y="534.9" font-size="5.05" fill="#111" text-anchor="middle" stroke="#111" stroke-width="0.12">Feature Usage Statistics</text>
<rect x="773" y="529" width="50.799999999999955" height="7.9" fill="#fdf5c0"/>
<text x="798.4" y="534.9" font-size="5.05" fill="#111" text-anchor="middle" stroke="#111" stroke-width="0.12">Historical Usage</text>
<rect x="825.4" y="529" width="81.0" height="7.9" fill="#93bd63"/>
<text x="865.9" y="534.9" font-size="5.05" fill="#111" text-anchor="middle" stroke="#111" stroke-width="0.12">Activated Management Packs</text>
<rect x="908.8" y="529" width="36.0" height="7.9" fill="#93bd63"/>
<text x="926.8" y="534.9" font-size="5.05" fill="#111" text-anchor="middle" stroke="#111" stroke-width="0.12">DB Control</text>
<rect x="947" y="529" width="29.399999999999977" height="7.9" fill="#93bd63"/>
<text x="961.7" y="534.9" font-size="5.05" fill="#111" text-anchor="middle" stroke="#111" stroke-width="0.12">OEM</text>
<defs><linearGradient id="fade" x1="0" x2="1"><stop offset="0" stop-color="#93bd63"/><stop offset="1" stop-color="#93bd63" stop-opacity="0.1"/></linearGradient></defs>
<rect x="979.6" y="529" width="17.4" height="7.9" fill="url(#fade)"/>
<text x="987" y="534.9" font-size="5.05" fill="#6f8f55" text-anchor="middle" opacity="0.75">Ma</text>
<line x1="1001.8" y1="532.8" x2="1007.2" y2="532.8" stroke="#444" stroke-width="0.8" />
<line x1="1004.5" y1="530.1" x2="1004.5" y2="535.5" stroke="#444" stroke-width="0.8" />
<line x1="1012.2" y1="528.2" x2="1012.2" y2="537.4" stroke="#dcdcdc" stroke-width="0.5" />
<defs><linearGradient id="sbg" x1="0" y1="0" x2="0" y2="1"><stop offset="0" stop-color="#e9e9e9"/><stop offset="1" stop-color="#d2d2d2"/></linearGradient></defs>
<rect x="0" y="537.8" width="1024" height="9.2" fill="url(#sbg)"/>
<line x1="0" y1="537.9" x2="1024" y2="537.9" stroke="#d2d2d2" stroke-width="0.5" />
<text x="7" y="544.9" font-size="4.9" fill="#7c7c7c" stroke="#7c7c7c" stroke-width="0.06" textLength="17.2" lengthAdjust="spacingAndGlyphs">Gereed</text>
<rect x="896.2" y="538" width="13.6" height="9" fill="#b4b4b4"/>
<rect x="900.2" y="539.9" width="5.8" height="5.6" fill="none" stroke="#f2f2f2" stroke-width="0.7"/>
<line x1="903.1" y1="539.9" x2="903.1" y2="545.5" stroke="#f2f2f2" stroke-width="0.6" />
<line x1="900.2" y1="542.7" x2="906" y2="542.7" stroke="#f2f2f2" stroke-width="0.6" />
<rect x="914.7" y="540.3" width="6" height="5.4" fill="none" stroke="#7c7c7c" stroke-width="0.6"/>
<rect x="916.3" y="541.6" width="2.8" height="3.9" fill="#bdbdbd" stroke="#7c7c7c" stroke-width="0.4"/>
<rect x="929.2" y="540.3" width="5.6" height="5.4" fill="none" stroke="#7c7c7c" stroke-width="0.6"/>
<path d="M929.2 543.4 H932.4 V540.3" stroke="#7c7c7c" fill="none" stroke-width="0.5" />
<line x1="941.8" y1="542.8" x2="945.2" y2="542.8" stroke="#666" stroke-width="0.7" />
<line x1="948.2" y1="542.8" x2="988.4" y2="542.8" stroke="#b4b4b4" stroke-width="1.2" />
<circle cx="972.5" cy="542.9" r="3.1" fill="#fff" stroke="#cfcfcf" stroke-width="0.35"/>
<line x1="990.6" y1="542.8" x2="994.6" y2="542.8" stroke="#555" stroke-width="0.7" />
<line x1="992.6" y1="540.8" x2="992.6" y2="544.8" stroke="#555" stroke-width="0.7" />
<text x="1001.3" y="544.5" font-size="4.9" fill="#808080" stroke="#808080" stroke-width="0.06" textLength="12.3" lengthAdjust="spacingAndGlyphs">160%</text>
<path d="M1024 544.6 V547 H1020.6 C1022.4 547 1024 546 1024 544.6 Z" stroke="none" fill="#2d2466" stroke-width="1" />
</svg>
</div>
</body>
</html>
